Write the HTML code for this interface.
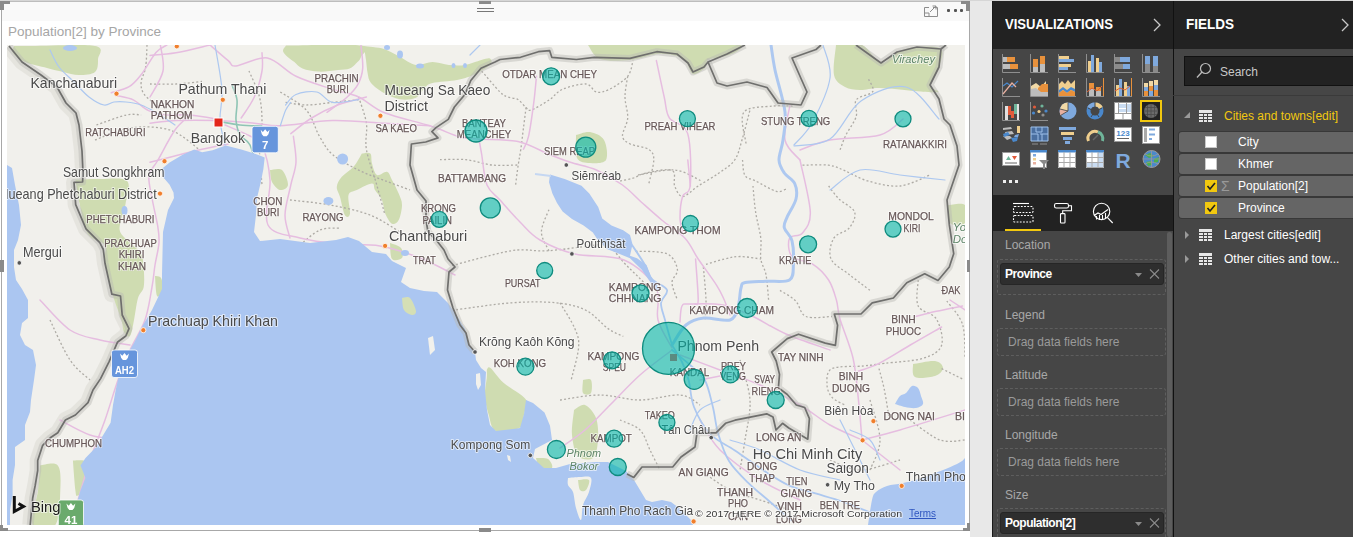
<!DOCTYPE html>
<html><head><meta charset="utf-8">
<style>
*{margin:0;padding:0;box-sizing:border-box}
html,body{width:1353px;height:537px;overflow:hidden;background:#fff;font-family:"Liberation Sans",sans-serif}
.a{position:absolute}
.lbl{position:absolute;color:#a8a8a8;font-size:12px;left:1005px}
.well{position:absolute;left:997px;width:169px;height:28px;border:1px dashed #5e5e5e;border-radius:3px}
.well span{position:absolute;left:10px;top:6px;font-size:12px;color:#9a9a9a}
.pill{position:absolute;left:1000px;width:164px;height:22px;background:#2e2e2e;border:1px solid #262626;border-radius:3px;color:#fff;font-size:12px;font-weight:bold;letter-spacing:-0.5px}
.pill b{position:absolute;left:4px;top:3px}
.frow{position:absolute;left:1179px;width:180px;height:20px;background:#656565;border-radius:3px;box-shadow:0 0 0 1px #383838}
.frow i{position:absolute;left:26px;top:4px;width:12px;height:12px;background:#fff;border:1px solid #c8c8c8}
.frow i.ck{background:#f2c80f;border-color:#f2c80f}
.frow span{position:absolute;left:59px;top:3px;color:#fff;font-size:12px}
</style></head><body>
<!-- canvas background -->
<div class="a" style="left:0;top:0;width:970px;height:537px;background:#fff"></div>
<!-- header strip -->
<div class="a" style="left:2px;top:2px;width:967px;height:19px;background:#f9f9f9"></div>
<!-- frame borders -->
<div class="a" style="left:0;top:0;width:970px;height:2px;background:#bdbdbd"></div>
<div class="a" style="left:1px;top:0;width:1px;height:531px;background:#a8a8a8"></div>
<div class="a" style="left:969px;top:0;width:1px;height:531px;background:#a8a8a8"></div>
<div class="a" style="left:1px;top:530px;width:969px;height:1px;background:#a8a8a8"></div>
<!-- handles -->
<div class="a" style="left:0;top:1px;width:10px;height:3px;background:#8a8a8a"></div>
<div class="a" style="left:0;top:1px;width:4px;height:9px;background:#8a8a8a"></div>
<div class="a" style="left:961px;top:1px;width:9px;height:3px;background:#8a8a8a"></div>
<div class="a" style="left:966px;top:1px;width:4px;height:10px;background:#8a8a8a"></div>
<div class="a" style="left:479px;top:1px;width:12px;height:3px;background:#8a8a8a"></div>
<div class="a" style="left:479px;top:528px;width:12px;height:4px;background:#8a8a8a"></div>
<div class="a" style="left:0;top:260px;width:4px;height:12px;background:#8a8a8a"></div>
<div class="a" style="left:967px;top:260px;width:3px;height:12px;background:#8a8a8a"></div>
<div class="a" style="left:0;top:525px;width:3px;height:6px;background:#8a8a8a"></div>
<div class="a" style="left:0;top:528px;width:8px;height:3px;background:#8a8a8a"></div>
<div class="a" style="left:963px;top:528px;width:7px;height:3px;background:#8a8a8a"></div>
<div class="a" style="left:967px;top:523px;width:3px;height:8px;background:#8a8a8a"></div>
<!-- hamburger -->
<div class="a" style="left:477px;top:8px;width:17px;height:1px;background:#777"></div>
<div class="a" style="left:477px;top:11px;width:17px;height:1px;background:#777"></div>
<!-- focus icon -->
<svg class="a" style="left:922px;top:3px" width="18" height="15" viewBox="0 0 18 15">
<path d="M2.5 4.5 V13.5 H15.5 V4.5 M2.5 4.5 H7 M11 4.5 H15.5" fill="none" stroke="#8c8c8c" stroke-width="1"/>
<path d="M2.5 10 H7 V13.5" fill="none" stroke="#8c8c8c" stroke-width="1"/>
<path d="M8 9 L14 3 M10.5 3 H14 V6.5" fill="none" stroke="#8c8c8c" stroke-width="1"/>
</svg>
<div class="a" style="left:947px;top:9px;width:3px;height:3px;background:#555;border-radius:1px"></div>
<div class="a" style="left:954px;top:9px;width:3px;height:3px;background:#555;border-radius:1px"></div>
<div class="a" style="left:960px;top:9px;width:3px;height:3px;background:#555;border-radius:1px"></div>
<!-- title -->
<div class="a" style="left:8px;top:24px;font-size:13.5px;color:#a6a6a6;white-space:nowrap">Population[2] by Province</div>

<!-- MAP -->
<div id="map" class="a" style="will-change:transform;left:7px;top:45px;width:958px;height:480px;overflow:hidden;background:#f2f1ec">
<svg width="958" height="480" viewBox="7 45 958 480" style="display:block;font-family:'Liberation Sans',sans-serif"><path d="M7 45 L9 46 L22 62 L41 75 L57 87 L66 103 L76 113 L79 125 L82 151 L83 173 L82.6 182 L74 182.4 L75.7 204.7 L86 228.8 L99.8 242.6 L103.3 249.5 L105 263.3 L111.9 294.2 L120.5 296 L122.2 315 L129 328.7 L125.8 336 L117.4 342.3 L109 361.8 L100.6 378.6 L93 390 L88 402.6 L75.4 415 L65.4 420 L57.8 432.7 L50.3 437.8 L42.7 445.3 L37.7 460.4 L37.7 470.5 L35.2 485.5 L32.7 498 L30.2 525 L7 525 Z" fill="#f1f0ec"/>
<clipPath id="mmclip"><path d="M7 45 L9 46 L22 62 L41 75 L57 87 L66 103 L76 113 L79 125 L82 151 L83 173 L82.6 182 L74 182.4 L75.7 204.7 L86 228.8 L99.8 242.6 L103.3 249.5 L105 263.3 L111.9 294.2 L120.5 296 L122.2 315 L129 328.7 L125.8 336 L117.4 342.3 L109 361.8 L100.6 378.6 L93 390 L88 402.6 L75.4 415 L65.4 420 L57.8 432.7 L50.3 437.8 L42.7 445.3 L37.7 460.4 L37.7 470.5 L35.2 485.5 L32.7 498 L30.2 525 L7 525 Z"/></clipPath>
<path d="M9 46 L22 62 L41 75 L57 87 L66 103 L76 113 L79 125 L82 151 L83 173 L82.6 182 L74 182.4 L75.7 204.7 L86 228.8 L99.8 242.6 L103.3 249.5 L105 263.3 L111.9 294.2 L120.5 296 L122.2 315 L129 328.7 L125.8 336 L117.4 342.3 L109 361.8 L100.6 378.6 L93 390 L88 402.6 L75.4 415 L65.4 420 L57.8 432.7 L50.3 437.8 L42.7 445.3 L37.7 460.4 L37.7 470.5 L35.2 485.5 L32.7 498 L30.2 525" fill="none" stroke="#d6d4cf" stroke-opacity="0.45" stroke-width="16" stroke-linejoin="round" clip-path="url(#mmclip)"/>
<path d="M7 165 L12 168 L15 185 L19 205 L21 225 L18 240 L14 250 L14 267 L16 280 L22 289 L28 300 L28 318 L22 323 L20 335 L25 345 L33 350 L36 365 L34 380 L31 400 L30 412 L25 425 L25 440 L15 447 L15 465 L12.6 480 L12.6 495 L10 510 L10 525 L7 525 Z" fill="#abc6f1"/>
<path d="M14 46 C17.0 46.0 18.5 46.0 32 46 C45.5 46.0 84.0 43.8 95 46 C106.0 48.2 98.0 54.7 98 59 C98.0 63.3 98.2 69.3 95 72 C91.8 74.7 84.3 75.0 79 75 C73.7 75.0 68.3 73.2 63 72 C57.7 70.8 53.3 69.7 47 68 C40.7 66.3 30.7 64.5 25 62 C19.3 59.5 14.8 55.7 13 53 C11.2 50.3 13.8 47.2 14 46" fill="#cfdcb1"/>
<path d="M286 45.6 C298.5 45.6 348.5 43.7 361 45.6 C373.5 47.5 361.8 54.0 361 57 C360.2 60.0 357.9 61.6 356 63.5 C354.1 65.4 352.7 67.3 349.7 68.4 C346.7 69.5 343.1 69.5 338 70 C332.9 70.5 324.7 71.9 318.8 71.6 C312.9 71.3 306.6 70.0 302.5 68.4 C298.4 66.8 297.1 64.2 294.4 62 C291.6 59.8 287.9 57.3 286 55.4 C284.1 53.5 283.0 52.1 283 50.5 C283.0 48.9 285.5 46.4 286 45.6" fill="#cfdcb1"/>
<path d="M364 46 C367.3 46.5 378.0 47.2 384 49 C390.0 50.8 394.7 54.3 400 57 C405.3 59.7 410.6 64.2 416 65 C421.4 65.8 427.1 62.0 432.6 62 C438.1 62.0 443.6 64.5 449 65 C454.4 65.5 459.6 65.8 465 65 C470.4 64.2 477.2 61.1 481.4 60 C485.6 58.9 488.6 57.8 490 58.6 C491.4 59.4 492.8 62.3 490 65 C487.2 67.7 478.5 72.5 473 75 C467.5 77.5 463.7 78.7 457 80 C450.3 81.3 438.0 81.7 432.6 83 C427.2 84.3 427.3 85.5 424.5 88 C421.7 90.5 420.1 95.8 416 97.7 C411.9 99.6 405.3 100.1 400 99.3 C394.7 98.5 388.8 95.7 384 93 C379.2 90.3 373.7 86.3 371 83 C368.3 79.7 368.4 76.8 367.6 73 C366.8 69.2 366.6 64.5 366 60 C365.4 55.5 364.3 48.3 364 46" fill="#cfdcb1"/>
<path d="M75.4 179.8 C79.5 179.7 91.4 178.8 100 179 C108.6 179.2 122.7 176.9 127 181 C131.3 185.1 126.5 197.2 125.6 203.5 C124.7 209.8 122.3 214.2 121.4 218.8 C120.5 223.5 118.6 227.4 120 231.4 C121.4 235.4 126.3 238.9 129.8 242.6 C133.3 246.3 138.7 249.5 141 253.7 C143.3 257.9 143.2 262.1 143.7 267.7 C144.1 273.2 144.6 281.9 143.7 287 C142.8 292.1 139.6 292.5 138 298 C136.4 303.5 135.3 313.7 134 320 C132.7 326.3 131.7 334.0 130 336 C128.3 338.0 125.4 334.7 124 332 C122.6 329.3 123.2 326.1 121.4 320 C119.6 313.9 115.8 305.3 113 295.6 C110.2 285.9 106.1 270.4 104.7 262 C103.3 253.6 107.5 249.7 104.7 245 C101.9 240.3 92.2 240.9 88 234 C83.8 227.1 81.6 212.5 79.5 203.5 C77.4 194.5 76.1 183.8 75.4 179.8" fill="#cfdcb1"/>
<path d="M155 276 C156.0 276.3 159.7 275.7 161 278 C162.3 280.3 163.7 287.0 163 290 C162.3 293.0 158.3 298.3 157 296 C155.7 293.7 155.3 279.3 155 276" fill="#cfdcb1"/>
<path d="M361.9 153.4 C363.3 153.4 368.6 151.7 370.3 153.4 C372.0 155.1 370.9 159.8 372 163.4 C373.1 167.0 374.5 173.6 377 175 C379.5 176.4 384.5 171.0 387 171.8 C389.5 172.6 390.1 176.4 392 180 C393.9 183.6 397.0 189.4 398.7 193.6 C400.4 197.8 402.0 200.6 402 205 C402.0 209.4 400.4 216.9 398.7 220 C397.0 223.1 394.2 224.8 392 223.7 C389.8 222.6 387.0 217.6 385.3 213.7 C383.6 209.8 383.7 203.9 382 200 C380.3 196.1 376.7 192.8 375 190 C373.3 187.2 375.0 183.5 372 183.5 C369.0 183.5 360.7 188.1 356.8 190 C352.9 191.9 349.6 191.1 348.5 195 C347.4 198.9 350.6 210.3 350 213.7 C349.4 217.1 346.7 218.1 345 215.3 C343.3 212.5 341.4 201.8 340 197 C338.6 192.2 336.5 190.2 336.8 186.8 C337.1 183.4 339.0 180.2 341.8 176.8 C344.6 173.5 350.1 170.6 353.5 166.7 C356.9 162.8 360.5 155.6 361.9 153.4" fill="#cfdcb1"/>
<path d="M270 170 C272.0 170.0 279.0 167.5 282 170 C285.0 172.5 288.3 181.7 288 185 C287.7 188.3 282.7 190.5 280 190 C277.3 189.5 273.7 185.3 272 182 C270.3 178.7 270.3 172.0 270 170" fill="#cfdcb1"/>
<path d="M836 45 C840.3 45.0 854.5 42.0 862 45 C869.5 48.0 875.2 61.8 881 63 C886.8 64.2 891.0 54.7 897 52 C903.0 49.3 909.7 47.5 917 47 C924.3 46.5 937.3 45.7 941 49 C944.7 52.3 940.8 61.0 939 67 C937.2 73.0 930.2 80.8 930 85 C929.8 89.2 940.5 91.0 938 92 C935.5 93.0 924.7 91.7 915 91 C905.3 90.3 889.2 88.2 880 88 C870.8 87.8 865.8 90.2 860 90 C854.2 89.8 849.3 89.5 845 87 C840.7 84.5 835.5 82.0 834 75 C832.5 68.0 835.7 50.0 836 45" fill="#cfdcb1"/>
<path d="M588 45 C606.7 45.0 674.7 45.0 700 45 C725.3 45.0 734.0 43.8 740 45 C746.0 46.2 739.0 50.0 736 52 C733.0 54.0 726.7 55.7 722 57 C717.3 58.3 710.8 58.2 708 60 C705.2 61.8 707.5 65.7 705 68 C702.5 70.3 696.2 75.0 693 74 C689.8 73.0 688.7 65.0 686 62 C683.3 59.0 681.8 57.3 677 56 C672.2 54.7 664.8 53.3 657 54 C649.2 54.7 639.5 59.2 630 60 C620.5 60.8 607.0 61.5 600 59 C593.0 56.5 590.0 47.3 588 45" fill="#cfdcb1"/>
<path d="M576 135 C578.3 134.5 585.3 131.2 590 132 C594.7 132.8 601.3 135.3 604 140 C606.7 144.7 608.3 156.2 606 160 C603.7 163.8 594.8 163.3 590 163 C585.2 162.7 579.3 162.7 577 158 C574.7 153.3 576.2 138.8 576 135" fill="#cfdcb1"/>
<path d="M486.8 369.8 C487.4 369.5 487.7 365.8 490.5 368 C493.3 370.2 497.6 377.5 503.5 382.8 C509.4 388.1 522.5 394.3 525.9 399.6 C529.3 404.9 524.9 409.9 524 414.5 C523.1 419.1 525.0 424.7 520.3 427.5 C515.6 430.3 501.3 433.4 496 431.2 C490.7 429.0 490.5 420.4 488.6 414.5 C486.8 408.6 485.2 402.1 484.9 395.9 C484.6 389.7 486.5 381.5 486.8 377.2 C487.1 372.9 486.8 371.0 486.8 369.8" fill="#cfdcb1"/>
<path d="M574 410 C575.8 409.2 581.3 403.7 585 405 C588.7 406.3 593.8 412.2 596 418 C598.2 423.8 598.5 433.3 598 440 C597.5 446.7 596.3 455.3 593 458 C589.7 460.7 581.5 459.8 578 456 C574.5 452.2 572.7 442.7 572 435 C571.3 427.3 573.7 414.2 574 410" fill="#cfdcb1"/>
<path d="M583 380 C584.3 380.0 589.7 377.8 591 380 C592.3 382.2 592.3 390.8 591 393 C589.7 395.2 584.3 395.2 583 393 C581.7 390.8 583.0 382.2 583 380" fill="#cfdcb1"/>
<path d="M536 458 C538.0 458.2 545.3 457.3 548 459 C550.7 460.7 553.3 466.3 552 468 C550.7 469.7 542.7 470.7 540 469 C537.3 467.3 536.7 459.8 536 458" fill="#cfdcb1"/>
<path d="M390 243 C391.8 243.8 399.0 245.5 401 248 C403.0 250.5 403.5 256.2 402 258 C400.5 259.8 394.0 261.5 392 259 C390.0 256.5 390.3 245.7 390 243" fill="#cfdcb1"/>
<path d="M913 364 C916.7 363.5 930.0 360.3 935 361 C940.0 361.7 943.0 365.5 943 368 C943.0 370.5 939.7 374.5 935 376 C930.3 377.5 918.7 379.0 915 377 C911.3 375.0 913.3 366.2 913 364" fill="#cfdcb1"/>
<path d="M948 205 C950.8 205.0 962.2 202.0 965 205 C967.8 208.0 967.5 220.0 965 223 C962.5 226.0 952.8 226.0 950 223 C947.2 220.0 948.3 208.0 948 205" fill="#cfdcb1"/>
<path d="M72.9 460.4 C75.4 460.8 85.5 458.8 88 463 C90.5 467.2 89.7 480.1 88 485.5 C86.3 490.9 80.1 494.8 78 495.6 C75.9 496.5 76.2 496.5 75.4 490.6 C74.6 484.7 73.3 465.4 72.9 460.4" fill="#cfdcb1"/>
<path d="M40 465.4 C43.0 465.4 54.4 461.2 57.8 465.4 C61.2 469.6 60.7 480.7 60.3 490.6 C59.9 500.5 59.9 519.3 55.3 525 C50.7 530.7 35.6 530.7 32.7 525 C29.8 519.3 36.8 500.5 38 490.6 C39.2 480.7 39.7 469.6 40 465.4" fill="#cfdcb1"/>
<path d="M583 480 C584.3 479.7 589.5 476.0 591 478 C592.5 480.0 593.0 490.0 592 492 C591.0 494.0 586.5 492.0 585 490 C583.5 488.0 583.3 481.7 583 480" fill="#cfdcb1"/>
<path d="M583 428 C584.2 427.5 588.8 424.2 590 425 C591.2 425.8 591.2 432.5 590 433 C588.8 433.5 584.2 428.8 583 428" fill="#cfdcb1"/>
<path d="M147 45 C146.8 48.7 146.6 61.2 145.6 67.4 C144.6 73.6 141.3 77.8 141.1 82.3 C140.8 86.8 141.6 90.5 144.1 94.2 C146.6 97.9 154.0 102.9 156 104.6" fill="none" stroke="#aeaba5" stroke-width="1.3" stroke-dasharray="2 2.2"/>
<path d="M96.4 125 C101.4 123.3 118.8 116.7 126.2 115 C133.7 113.3 138.6 115.0 141.1 115" fill="none" stroke="#aeaba5" stroke-width="1.3" stroke-dasharray="2 2.2"/>
<path d="M95 140 C100.8 138.0 117.5 129.7 130 128 C142.5 126.3 158.3 126.3 170 130 C181.7 133.7 195.0 146.7 200 150" fill="none" stroke="#aeaba5" stroke-width="1.3" stroke-dasharray="2 2.2"/>
<path d="M249 71 C250.8 75.3 257.3 88.3 259.5 97 C261.7 105.7 262.0 114.5 262 123.2 C262.0 131.9 259.5 139.0 259.5 149.3 C259.5 159.6 261.6 179.1 262 185" fill="none" stroke="#aeaba5" stroke-width="1.3" stroke-dasharray="2 2.2"/>
<path d="M150 84 C154.3 84.0 167.3 84.4 176 84 C184.7 83.6 197.7 81.9 202 81.5" fill="none" stroke="#aeaba5" stroke-width="1.3" stroke-dasharray="2 2.2"/>
<path d="M280.3 92 C284.6 95.0 299.9 102.8 306.4 110.2 C312.9 117.6 315.0 128.8 319.4 136.2 C323.8 143.6 326.0 148.8 332.5 154.5 C339.0 160.2 349.9 165.8 358.6 170.1 C367.3 174.4 376.0 177.3 384.6 180.6 C393.2 183.9 405.8 188.4 410 190" fill="none" stroke="#aeaba5" stroke-width="1.3" stroke-dasharray="2 2.2"/>
<path d="M358.6 97 C359.9 101.4 365.1 114.5 366.4 123.2 C367.7 131.9 364.7 139.0 366.4 149.3 C368.1 159.6 373.7 174.1 376.8 185 C379.9 195.9 383.6 210.0 385 215" fill="none" stroke="#aeaba5" stroke-width="1.3" stroke-dasharray="2 2.2"/>
<path d="M285.6 102.4 C289.1 102.8 298.6 105.0 306.4 105 C314.2 105.0 323.8 103.3 332.5 102.4 C341.2 101.5 354.2 100.2 358.6 99.7" fill="none" stroke="#aeaba5" stroke-width="1.3" stroke-dasharray="2 2.2"/>
<path d="M290 200 C296.7 200.8 316.7 202.5 330 205 C343.3 207.5 358.3 210.5 370 215 C381.7 219.5 395.0 229.2 400 232" fill="none" stroke="#aeaba5" stroke-width="1.3" stroke-dasharray="2 2.2"/>
<path d="M300 245 C303.3 242.5 313.3 232.8 320 230 C326.7 227.2 336.7 228.3 340 228" fill="none" stroke="#aeaba5" stroke-width="1.3" stroke-dasharray="2 2.2"/>
<path d="M481.7 71 C484.8 74.5 495.6 87.7 500 92 C504.4 96.3 504.8 95.7 507.8 97 C510.8 98.3 515.2 97.9 518.2 99.7 C521.2 101.5 523.8 105.9 526 107.6 C528.2 109.3 527.3 111.3 531.2 110 C535.1 108.7 544.3 103.2 549.5 99.7 C554.7 96.2 556.4 91.9 562.5 89.3 C568.6 86.7 580.4 83.5 586 84 C591.6 84.5 592.5 91.1 596.4 92 C600.3 92.9 604.2 91.9 609.4 89.3 C614.6 86.7 623.8 81.1 627.7 76.3 C631.6 71.5 632.1 63.2 633 60.6" fill="none" stroke="#aeaba5" stroke-width="1.3" stroke-dasharray="2 2.2"/>
<path d="M526 107.6 C525.6 111.1 524.3 121.5 523.4 128.4 C522.5 135.4 521.7 143.2 520.8 149.3 C519.9 155.4 519.1 159.1 518.2 165 C517.3 170.9 516.0 181.7 515.6 185" fill="none" stroke="#aeaba5" stroke-width="1.3" stroke-dasharray="2 2.2"/>
<path d="M627.7 76.3 C627.2 79.8 625.0 90.0 625 97 C625.0 104.0 628.1 111.5 627.7 118 C627.3 124.5 622.1 131.7 622.5 136 C622.9 140.3 626.0 141.8 630.3 144 C634.6 146.2 644.6 146.7 648.5 149.3 C652.4 151.9 653.8 153.8 653.8 159.7 C653.8 165.6 649.4 180.8 648.5 185" fill="none" stroke="#aeaba5" stroke-width="1.3" stroke-dasharray="2 2.2"/>
<path d="M440 159.7 C444.3 159.7 457.3 158.8 466 159.7 C474.7 160.6 483.3 164.1 492 165 C500.7 165.9 513.7 165.0 518 165" fill="none" stroke="#aeaba5" stroke-width="1.3" stroke-dasharray="2 2.2"/>
<path d="M638 175 C644.1 174.2 664.1 169.1 674.6 170 C685.1 170.9 696.4 178.8 700.7 180.6" fill="none" stroke="#aeaba5" stroke-width="1.3" stroke-dasharray="2 2.2"/>
<path d="M620 180.9 C622.2 180.4 628.7 179.5 633 178.2 C637.3 176.9 639.5 174.3 646 173 C652.5 171.7 667.2 168.2 672 170.4 C676.8 172.6 672.9 181.7 674.7 186 C676.5 190.3 678.7 196.5 682.6 196.5 C686.5 196.5 692.1 189.9 698.2 186 C704.3 182.1 712.9 177.3 719 173 C725.1 168.7 730.9 165.5 734.7 160 C738.5 154.5 739.5 148.3 742 140 C744.5 131.7 748.7 115.0 750 110" fill="none" stroke="#aeaba5" stroke-width="1.3" stroke-dasharray="2 2.2"/>
<path d="M742.5 160 C742.9 162.6 742.8 172.1 745 175.6 C747.2 179.1 750.4 178.3 755.6 180.9 C760.8 183.5 771.2 190.0 776.4 191.3 C781.6 192.6 785.1 189.1 786.8 188.7" fill="none" stroke="#aeaba5" stroke-width="1.3" stroke-dasharray="2 2.2"/>
<path d="M753 186 C753.4 190.3 754.3 203.3 755.6 212 C756.9 220.7 759.9 230.4 760.8 238.2 C761.7 246.0 759.9 252.9 760.8 259 C761.7 265.1 764.7 267.9 766 274.7 C767.3 281.5 768.2 295.8 768.6 300" fill="none" stroke="#aeaba5" stroke-width="1.3" stroke-dasharray="2 2.2"/>
<path d="M706 264.3 C709.0 263.4 718.6 260.3 724.3 259 C730.0 257.7 733.9 256.5 740 256.5 C746.1 256.5 757.3 258.6 760.8 259" fill="none" stroke="#aeaba5" stroke-width="1.3" stroke-dasharray="2 2.2"/>
<path d="M703.4 267 C703.8 272.5 705.7 291.2 706 300 C706.3 308.8 705.2 316.7 705 320" fill="none" stroke="#aeaba5" stroke-width="1.3" stroke-dasharray="2 2.2"/>
<path d="M802.5 165.2 C806.9 165.2 821.6 164.3 828.6 165.2 C835.6 166.1 837.7 167.8 844.2 170.4 C850.7 173.0 858.4 178.3 867.7 180.9 C877.0 183.5 889.6 187.0 900 186 C910.4 185.0 925.0 176.8 930 175" fill="none" stroke="#aeaba5" stroke-width="1.3" stroke-dasharray="2 2.2"/>
<path d="M828.6 186 C830.3 188.2 834.7 194.7 839 199 C843.3 203.3 852.9 207.2 854.6 212 C856.3 216.8 852.9 223.4 849.4 227.8 C845.9 232.2 836.9 233.0 833.8 238.2 C830.7 243.4 828.4 252.9 831 259 C833.6 265.1 842.9 269.5 849.4 274.7 C855.9 279.9 866.6 287.7 870 290.3" fill="none" stroke="#aeaba5" stroke-width="1.3" stroke-dasharray="2 2.2"/>
<path d="M635.6 251.2 C640.8 251.6 660.0 250.8 667 253.8 C674.0 256.9 676.6 264.7 677.4 269.5 C678.2 274.3 672.0 277.4 672 282.5 C672.0 287.6 676.5 297.1 677.4 300" fill="none" stroke="#aeaba5" stroke-width="1.3" stroke-dasharray="2 2.2"/>
<path d="M452 265.6 C461.9 263.1 495.5 253.2 511.6 250.7 C527.8 248.2 532.8 251.9 548.9 250.7 C565.0 249.5 598.5 244.5 608.4 243.3" fill="none" stroke="#aeaba5" stroke-width="1.3" stroke-dasharray="2 2.2"/>
<path d="M452 310.3 C461.9 309.1 494.2 304.1 511.6 302.8 C529.0 301.6 543.9 301.6 556.3 302.8 C568.7 304.1 577.3 306.0 586 310.3 C594.7 314.6 602.2 324.6 608.4 328.9 C614.6 333.2 620.8 335.1 623.3 336.3" fill="none" stroke="#aeaba5" stroke-width="1.3" stroke-dasharray="2 2.2"/>
<path d="M548.9 209.8 C547.6 213.5 541.4 225.2 541.4 232 C541.4 238.8 547.6 247.6 548.9 250.7" fill="none" stroke="#aeaba5" stroke-width="1.3" stroke-dasharray="2 2.2"/>
<path d="M608.4 243.3 C610.9 246.4 618.3 256.3 623.3 261.9 C628.3 267.5 633.2 271.9 638.2 276.8 C643.2 281.8 650.5 289.1 653 291.6" fill="none" stroke="#aeaba5" stroke-width="1.3" stroke-dasharray="2 2.2"/>
<path d="M560 302.8 C562.5 307.1 571.9 321.4 575 328.9 C578.1 336.3 579.2 339.0 578.6 347.5 C578.0 356.0 572.4 374.6 571.2 380" fill="none" stroke="#aeaba5" stroke-width="1.3" stroke-dasharray="2 2.2"/>
<path d="M560 400 C566.7 399.2 586.7 395.0 600 395 C613.3 395.0 626.7 400.0 640 400 C653.3 400.0 670.0 394.2 680 395 C690.0 395.8 696.7 403.3 700 405" fill="none" stroke="#aeaba5" stroke-width="1.3" stroke-dasharray="2 2.2"/>
<path d="M620 420 C623.3 421.7 635.0 425.0 640 430 C645.0 435.0 646.7 443.3 650 450 C653.3 456.7 658.3 466.7 660 470" fill="none" stroke="#aeaba5" stroke-width="1.3" stroke-dasharray="2 2.2"/>
<path d="M740 360 C741.7 366.7 749.2 386.7 750 400 C750.8 413.3 746.7 428.3 745 440 C743.3 451.7 740.8 465.0 740 470" fill="none" stroke="#aeaba5" stroke-width="1.3" stroke-dasharray="2 2.2"/>
<path d="M918.2 280 C918.2 284.3 915.2 299.5 918.2 306 C921.2 312.5 932.5 312.5 936.4 319 C940.3 325.5 943.8 338.7 941.6 345.2 C939.4 351.7 933.0 355.2 923.4 358.2 C913.8 361.2 894.3 362.1 884.3 363.4 C874.3 364.7 872.1 365.1 863.4 366 C854.7 366.9 838.1 365.6 832 368.6 C825.9 371.7 827.0 379.5 827 384.3 C827.0 389.1 829.0 393.8 832 397.3 C835.0 400.8 842.8 403.8 845 405.1" fill="none" stroke="#aeaba5" stroke-width="1.3" stroke-dasharray="2 2.2"/>
<path d="M780 290.4 C782.6 292.1 791.3 296.5 795.6 300.9 C799.9 305.2 799.9 313.9 806 316.5 C812.1 319.1 827.7 316.5 832 316.5" fill="none" stroke="#aeaba5" stroke-width="1.3" stroke-dasharray="2 2.2"/>
<path d="M879 368.6 C879.9 372.1 882.5 380.9 884.3 389.5 C886.0 398.1 888.6 414.9 889.5 420" fill="none" stroke="#aeaba5" stroke-width="1.3" stroke-dasharray="2 2.2"/>
<path d="M941.6 368.6 L962.5 379" fill="none" stroke="#aeaba5" stroke-width="1.3" stroke-dasharray="2 2.2"/>
<path d="M946.8 301 C949.4 304.9 959.5 314.8 962.5 324.3 C965.5 333.8 964.6 352.4 965 358" fill="none" stroke="#aeaba5" stroke-width="1.3" stroke-dasharray="2 2.2"/>
<path d="M700 470 C705.0 473.3 720.0 485.0 730 490 C740.0 495.0 750.0 496.7 760 500 C770.0 503.3 785.0 508.3 790 510" fill="none" stroke="#aeaba5" stroke-width="1.3" stroke-dasharray="2 2.2"/>
<path d="M870 400 C871.7 406.7 880.0 428.3 880 440 C880.0 451.7 871.7 465.0 870 470" fill="none" stroke="#aeaba5" stroke-width="1.3" stroke-dasharray="2 2.2"/>
<path d="M910 420 C915.0 423.3 930.8 436.7 940 440 C949.2 443.3 960.8 440.0 965 440" fill="none" stroke="#aeaba5" stroke-width="1.3" stroke-dasharray="2 2.2"/>
<path d="M830 460 C835.0 461.7 848.3 470.0 860 470 C871.7 470.0 893.3 461.7 900 460" fill="none" stroke="#aeaba5" stroke-width="1.3" stroke-dasharray="2 2.2"/>
<path d="M868.6 79.2 C869.3 81.3 874.8 88.1 872.7 91.6 C870.6 95.0 859.0 95.8 856.2 99.9 C853.5 104.1 857.9 110.6 856.2 116.5 C854.5 122.4 848.5 129.6 845.8 135.2 C843.1 140.8 841.0 147.5 840 150" fill="none" stroke="#aeaba5" stroke-width="1.3" stroke-dasharray="2 2.2"/>
<path d="M746 143.5 C745.6 138.3 739.3 118.5 743.8 112.3 C748.3 106.1 764.5 107.1 772.8 106.1 C781.1 105.1 790.1 106.1 793.6 106.1" fill="none" stroke="#aeaba5" stroke-width="1.3" stroke-dasharray="2 2.2"/>
<path d="M50 320 C53.3 326.7 63.3 350.0 70 360 C76.7 370.0 86.7 376.7 90 380" fill="none" stroke="#aeaba5" stroke-width="1.3" stroke-dasharray="2 2.2"/>
<path d="M210 45 C213.0 47.6 223.9 57.1 228.2 60.6 C232.5 64.1 229.5 66.3 236 65.9 C242.5 65.5 257.3 56.3 267.3 58 C277.3 59.7 285.1 71.1 296 76.3 C306.9 81.5 322.1 85.8 332.5 89.3 C342.9 92.8 349.9 93.1 358.6 97 C367.3 100.9 372.7 108.0 384.6 112.8 C396.5 117.6 417.4 121.8 430 125.8 C442.6 129.8 451.8 134.8 460 137 C468.2 139.2 469.3 138.2 479 139 C488.7 139.8 506.2 138.9 518 141.5 C529.8 144.1 540.8 151.0 549.5 154.5 C558.2 158.0 562.5 159.7 570.3 162.3 C578.1 164.9 587.7 166.2 596.4 170 C605.1 173.8 615.1 179.7 622.5 185 C629.9 190.3 634.4 195.9 640.9 201.7 C647.4 207.5 654.4 213.9 661.7 220 C669.1 226.1 678.9 231.7 685 238.2 C691.1 244.7 693.0 251.2 698.2 259 C703.5 266.8 712.1 278.3 716.5 285.1 C720.9 291.9 722.0 295.0 724.3 300 C726.5 305.0 729.0 312.5 730 315" fill="none" stroke="#e6bde0" stroke-width="1.5" stroke-linecap="round" stroke-linejoin="round"/>
<path d="M150 123.2 C154.3 122.8 165.2 121.0 176 120.6 C186.8 120.2 201.9 120.2 215 120.6 C228.1 121.0 243.4 122.3 254.3 123.2 C265.2 124.1 267.3 126.2 280.3 125.8 C293.3 125.4 315.1 121.0 332.5 120.6 C349.9 120.2 368.4 122.3 384.6 123.2 C400.9 124.1 422.4 125.4 430 125.8" fill="none" stroke="#e6bde0" stroke-width="1.5" stroke-linecap="round" stroke-linejoin="round"/>
<path d="M290.8 133.6 C294.3 131.0 303.8 122.8 311.6 118 C319.4 113.2 328.6 108.5 337.7 105 C346.8 101.5 361.6 98.3 366.4 97" fill="none" stroke="#e6bde0" stroke-width="1.5" stroke-linecap="round" stroke-linejoin="round"/>
<path d="M361 45.6 C361.3 49.4 363.2 61.9 362.7 68.4 C362.2 74.9 360.5 79.7 357.8 84.6 C355.1 89.5 351.5 93.1 346.4 97.7 C341.3 102.3 330.2 109.9 327 112.3" fill="none" stroke="#e6bde0" stroke-width="1.5" stroke-linecap="round" stroke-linejoin="round"/>
<path d="M293.4 136.2 C293.8 140.5 296.4 154.2 296 162.3 C295.6 170.4 292.6 176.2 290.8 185 C289.0 193.8 285.1 206.2 285 215 C284.9 223.8 289.2 234.2 290 238" fill="none" stroke="#e6bde0" stroke-width="1.5" stroke-linecap="round" stroke-linejoin="round"/>
<path d="M150 162.3 C153.5 161.4 162.2 159.2 170.9 157 C179.6 154.8 192.4 151.5 202 149.3 C211.6 147.1 223.8 144.9 228.2 144" fill="none" stroke="#e6bde0" stroke-width="1.5" stroke-linecap="round" stroke-linejoin="round"/>
<path d="M262 52.8 C262.0 55.8 263.3 63.6 262 71 C260.7 78.4 257.8 89.2 254.3 97 C250.8 104.8 243.4 114.5 241.2 118" fill="none" stroke="#e6bde0" stroke-width="1.5" stroke-linecap="round" stroke-linejoin="round"/>
<path d="M150 55.4 C154.3 55.0 166.0 54.5 176 52.8 C186.0 51.1 204.3 46.3 210 45" fill="none" stroke="#e6bde0" stroke-width="1.5" stroke-linecap="round" stroke-linejoin="round"/>
<path d="M160.4 45 C160.8 49.3 164.7 62.3 163 71 C161.3 79.7 152.2 92.7 150 97" fill="none" stroke="#e6bde0" stroke-width="1.5" stroke-linecap="round" stroke-linejoin="round"/>
<path d="M225 125 C229.2 126.8 243.8 132.7 250 136 C256.2 139.3 258.7 137.7 262 145 C265.3 152.3 269.0 166.7 270 180 C271.0 193.3 263.0 215.3 268 225 C273.0 234.7 288.0 234.8 300 238 C312.0 241.2 326.7 242.7 340 244 C353.3 245.3 366.7 243.7 380 246 C393.3 248.3 407.5 253.2 420 258 C432.5 262.8 449.2 272.2 455 275" fill="none" stroke="#e6bde0" stroke-width="1.5" stroke-linecap="round" stroke-linejoin="round"/>
<path d="M222 120 C216.7 119.2 199.2 115.8 190 115 C180.8 114.2 173.9 115.7 167 115 C160.1 114.3 154.2 113.1 148.6 110.6 C143.0 108.1 138.9 102.6 133.7 100.1 C128.5 97.6 120.0 96.4 117.3 95.7" fill="none" stroke="#e6bde0" stroke-width="1.5" stroke-linecap="round" stroke-linejoin="round"/>
<path d="M111.3 92.7 C114.3 91.7 124.2 89.7 129.2 86.7 C134.2 83.7 136.6 80.5 141.1 74.8 C145.6 69.1 151.7 57.5 156 52.5 C160.3 47.5 165.2 46.2 167 45" fill="none" stroke="#e6bde0" stroke-width="1.5" stroke-linecap="round" stroke-linejoin="round"/>
<path d="M190 115 C187.5 117.5 180.3 122.5 175 130 C169.7 137.5 162.3 152.4 158 160 C153.7 167.6 150.0 169.3 149 175.6 C148.0 181.9 150.6 189.6 152 198 C153.4 206.4 156.5 218.6 157.7 226 C158.9 233.4 159.4 236.1 159 242.6 C158.6 249.1 156.2 257.6 155 265 C153.8 272.4 153.7 277.8 152 287 C150.3 296.2 148.7 309.5 145 320 C141.3 330.5 134.5 340.0 130 350 C125.5 360.0 122.2 368.3 118 380 C113.8 391.7 109.7 406.7 105 420 C100.3 433.3 94.5 446.7 90 460 C85.5 473.3 81.3 489.2 78 500 C74.7 510.8 71.3 520.8 70 525" fill="none" stroke="#e6bde0" stroke-width="1.5" stroke-linecap="round" stroke-linejoin="round"/>
<path d="M479 139 C479.4 141.6 480.4 146.8 481.7 154.5 C483.0 162.2 483.9 177.4 487 185 C490.1 192.6 494.5 193.8 500 200 C505.5 206.2 513.3 215.3 520 222 C526.7 228.7 530.8 234.7 540 240 C549.2 245.3 561.0 250.7 575 254 C589.0 257.3 610.5 254.3 624 260 C637.5 265.7 650.3 278.0 656 288 C661.7 298.0 655.3 310.0 658 320 C660.7 330.0 669.7 343.3 672 348" fill="none" stroke="#e6bde0" stroke-width="1.5" stroke-linecap="round" stroke-linejoin="round"/>
<path d="M536.5 76.3 C536.0 80.7 535.1 92.4 533.8 102.4 C532.5 112.4 530.3 128.4 528.6 136.2 C526.9 144.0 524.3 147.1 523.4 149.3" fill="none" stroke="#e6bde0" stroke-width="1.5" stroke-linecap="round" stroke-linejoin="round"/>
<path d="M656.4 60.6 C657.7 66.7 662.0 87.4 664.2 97 C666.4 106.6 665.5 111.9 669.4 118 C673.3 124.1 684.2 122.4 687.7 133.6 C691.2 144.8 691.1 174.5 690.3 185 C689.4 195.5 684.3 191.1 682.6 196.5 C680.9 201.9 680.0 211.3 680 217.4 C680.0 223.5 682.2 230.4 682.6 233" fill="none" stroke="#e6bde0" stroke-width="1.5" stroke-linecap="round" stroke-linejoin="round"/>
<path d="M687.8 160 L690.4 186" fill="none" stroke="#e6bde0" stroke-width="1.5" stroke-linecap="round" stroke-linejoin="round"/>
<path d="M800 160 C801.7 168.7 809.9 199.8 810.3 212 C810.7 224.2 806.0 228.6 802.5 233 C799.0 237.4 791.2 234.3 789.5 238.2 C787.8 242.1 788.1 252.2 792 256.5 C795.9 260.9 806.9 260.4 813 264.3 C819.1 268.2 824.7 274.1 828.6 280 C832.5 285.9 834.5 293.5 836.4 300 C838.3 306.5 837.2 309.3 840 319 C842.8 328.7 850.0 344.9 853 358 C856.0 371.1 856.7 383.6 858.2 397.3 C859.7 411.0 861.4 432.9 862 440" fill="none" stroke="#e6bde0" stroke-width="1.5" stroke-linecap="round" stroke-linejoin="round"/>
<path d="M790 105 C789.2 110.8 783.3 130.8 785 140 C786.7 149.2 797.5 156.7 800 160" fill="none" stroke="#e6bde0" stroke-width="1.5" stroke-linecap="round" stroke-linejoin="round"/>
<path d="M695.6 259 C696.0 265.8 698.3 292.5 698.2 300 C698.1 307.5 695.5 303.3 695 304" fill="none" stroke="#e6bde0" stroke-width="1.5" stroke-linecap="round" stroke-linejoin="round"/>
<path d="M672 350 C666.7 354.2 650.3 365.8 640 375 C629.7 384.2 619.2 395.8 610 405 C600.8 414.2 593.3 422.8 585 430 C576.7 437.2 564.2 445.0 560 448" fill="none" stroke="#e6bde0" stroke-width="1.5" stroke-linecap="round" stroke-linejoin="round"/>
<path d="M680 355 C686.7 357.5 706.7 365.0 720 370 C733.3 375.0 746.7 379.2 760 385 C773.3 390.8 788.3 398.3 800 405 C811.7 411.7 819.7 419.2 830 425 C840.3 430.8 856.7 437.5 862 440" fill="none" stroke="#e6bde0" stroke-width="1.5" stroke-linecap="round" stroke-linejoin="round"/>
<path d="M680 322 C680.3 319.3 680.3 309.0 682 306 C683.7 303.0 683.2 304.2 690 304 C696.8 303.8 712.7 303.0 723 305 C733.3 307.0 741.5 311.2 752 316 C762.5 320.8 773.0 328.3 786 334 C799.0 339.7 822.7 347.3 830 350" fill="none" stroke="#e6bde0" stroke-width="1.5" stroke-linecap="round" stroke-linejoin="round"/>
<path d="M903 119 C899.2 121.7 892.2 131.5 880 135 C867.8 138.5 843.3 137.5 830 140 C816.7 142.5 805.0 148.3 800 150" fill="none" stroke="#e6bde0" stroke-width="1.5" stroke-linecap="round" stroke-linejoin="round"/>
<path d="M941.6 327 C936.4 330.0 920.7 338.9 910.3 345 C899.9 351.1 887.7 359.0 879 363.4 C870.3 367.8 861.7 369.9 858.2 371.2" fill="none" stroke="#e6bde0" stroke-width="1.5" stroke-linecap="round" stroke-linejoin="round"/>
<path d="M962.5 306 C958.1 306.9 944.2 309.6 936.4 311.3 C928.6 313.1 919.1 315.6 915.6 316.5" fill="none" stroke="#e6bde0" stroke-width="1.5" stroke-linecap="round" stroke-linejoin="round"/>
<path d="M730 374 L700 380" fill="none" stroke="#e6bde0" stroke-width="1.5" stroke-linecap="round" stroke-linejoin="round"/>
<path d="M862 440 C868.3 438.3 882.8 435.0 900 430 C917.2 425.0 954.2 413.3 965 410" fill="none" stroke="#e6bde0" stroke-width="1.5" stroke-linecap="round" stroke-linejoin="round"/>
<path d="M862 440 L900 470" fill="none" stroke="#e6bde0" stroke-width="1.5" stroke-linecap="round" stroke-linejoin="round"/>
<path d="M700 420 C703.3 425.0 710.0 440.0 720 450 C730.0 460.0 746.7 471.7 760 480 C773.3 488.3 793.3 496.7 800 500" fill="none" stroke="#e6bde0" stroke-width="1.5" stroke-linecap="round" stroke-linejoin="round"/>
<path d="M950 300 L965 310" fill="none" stroke="#e6bde0" stroke-width="1.5" stroke-linecap="round" stroke-linejoin="round"/>
<path d="M40 300 C45.0 305.0 60.0 323.3 70 330 C80.0 336.7 90.0 337.5 100 340 C110.0 342.5 125.0 344.2 130 345" fill="none" stroke="#e6bde0" stroke-width="1.5" stroke-linecap="round" stroke-linejoin="round"/>
<path d="M60 420 C65.0 422.5 80.0 431.7 90 435 C100.0 438.3 115.0 439.2 120 440" fill="none" stroke="#e6bde0" stroke-width="1.5" stroke-linecap="round" stroke-linejoin="round"/>
<path d="M232 85 C232.8 87.5 236.3 94.2 237 100 C237.7 105.8 235.5 114.2 236 120 C236.5 125.8 237.7 130.8 240 135 C242.3 139.2 247.0 138.8 250 145 C253.0 151.2 256.7 167.5 258 172" fill="none" stroke="#8fc5b5" stroke-width="1.6"/>
<path d="M222 122 C225.0 122.5 233.3 124.3 240 125 C246.7 125.7 258.3 125.8 262 126" fill="none" stroke="#8fc5b5" stroke-width="1.6"/>
<path d="M771 45 C771.7 49.2 772.7 58.8 775 70 C777.3 81.2 783.7 100.3 785 112 C786.3 123.7 784.0 132.0 783 140 C782.0 148.0 778.8 154.5 779 160 C779.2 165.5 781.7 169.1 784.3 173 C786.9 176.9 792.8 179.2 794.7 183.5 C796.7 187.8 797.3 193.3 796 199 C794.7 204.7 789.0 212.6 787 217.4 C785.0 222.2 783.5 223.9 784.3 227.8 C785.1 231.7 790.5 234.7 792 240.8 C793.5 246.9 793.8 257.8 793.4 264.3 C793.0 270.8 794.1 277.2 789.5 280 C784.9 282.8 773.4 280.8 766 281.2 C758.6 281.6 749.4 281.4 745.2 282.5 C741.0 283.6 742.2 283.9 741 288 C739.8 292.1 739.8 301.7 738 307 C736.2 312.3 735.7 318.2 730 320 C724.3 321.8 711.3 317.2 704 318 C696.7 318.8 691.3 320.5 686 325 C680.7 329.5 674.3 341.7 672 345" fill="none" stroke="#adc8f0" stroke-width="3" stroke-linecap="round" stroke-linejoin="round"/>
<path d="M672 345 C673.7 347.8 679.2 356.2 682 362 C684.8 367.8 686.6 372.5 688.6 380 C690.6 387.5 690.4 398.0 694 407 C697.6 416.0 703.5 426.8 710.2 434 C717.0 441.2 726.0 444.4 734.5 450.2 C743.0 456.0 752.5 463.1 761.5 469 C770.5 474.9 779.5 481.2 788.5 485.3 C797.5 489.4 806.5 490.7 815.5 493.4 C824.5 496.1 833.5 498.4 842.5 501.5 C851.5 504.6 865.0 510.5 869.5 512.3" fill="none" stroke="#adc8f0" stroke-width="1.8" stroke-linecap="round" stroke-linejoin="round"/>
<path d="M672 350 C675.0 352.5 684.5 360.0 690 365 C695.5 370.0 701.0 373.0 704.8 380 C708.6 387.0 710.6 398.0 712.9 407 C715.1 416.0 715.6 425.0 718.3 434 C721.0 443.0 724.0 452.9 729 461 C734.0 469.1 741.2 475.9 748 482.6 C754.8 489.4 762.4 495.2 769.6 501.5 C776.8 507.8 787.6 517.2 791.2 520.4" fill="none" stroke="#adc8f0" stroke-width="1.8" stroke-linecap="round" stroke-linejoin="round"/>
<path d="M632 245 C634.2 248.3 641.7 259.3 645 265 C648.3 270.7 648.3 274.8 652 279 C655.7 283.2 665.5 286.0 667 290 C668.5 294.0 661.3 298.0 661 303 C660.7 308.0 663.2 313.0 665 320 C666.8 327.0 670.8 340.8 672 345" fill="none" stroke="#adc8f0" stroke-width="1.8" stroke-linecap="round" stroke-linejoin="round"/>
<path d="M823 45 C824.2 50.5 831.8 65.0 830 78 C828.2 91.0 818.0 111.8 812 123 C806.0 134.2 797.0 141.3 794 145" fill="none" stroke="#adc8f0" stroke-width="1.2" stroke-linecap="round" stroke-linejoin="round"/>
<path d="M939 119 C933.5 113.7 919.0 90.0 906 87 C893.0 84.0 873.7 92.3 861 101 C848.3 109.7 841.2 131.5 830 139 C818.8 146.5 800.0 144.8 794 146" fill="none" stroke="#adc8f0" stroke-width="1.2" stroke-linecap="round" stroke-linejoin="round"/>
<path d="M945 180 C937.5 179.2 914.2 176.7 900 175 C885.8 173.3 871.7 167.5 860 170 C848.3 172.5 835.0 186.7 830 190" fill="none" stroke="#adc8f0" stroke-width="1.2" stroke-linecap="round" stroke-linejoin="round"/>
<path d="M50 50 C51.5 52.8 55.0 61.7 59 67 C63.0 72.3 69.0 77.0 74 82 C79.0 87.0 84.0 93.2 89 97 C94.0 100.8 99.8 104.2 104 105 C108.2 105.8 110.3 102.5 114 102 C117.7 101.5 121.5 101.5 126 102 C130.5 102.5 136.2 103.3 141 105 C145.8 106.7 149.3 108.7 155 112 C160.7 115.3 171.7 122.8 175 125" fill="none" stroke="#adc8f0" stroke-width="1.2" stroke-linecap="round" stroke-linejoin="round"/>
<path d="M215 45 C216.2 52.5 221.2 77.5 222 90 C222.8 102.5 219.5 110.8 220 120 C220.5 129.2 224.2 140.8 225 145" fill="none" stroke="#adc8f0" stroke-width="1.2" stroke-linecap="round" stroke-linejoin="round"/>
<path d="M285.6 105 C287.3 103.2 290.8 96.7 296 94.5 C301.2 92.3 310.7 90.7 316.8 92 C322.9 93.3 325.5 101.1 332.5 102.4 C339.5 103.7 354.2 100.2 358.6 99.7" fill="none" stroke="#adc8f0" stroke-width="1.2" stroke-linecap="round" stroke-linejoin="round"/>
<path d="M280.3 125.8 C281.2 123.2 283.9 114.1 285.6 110.2 C287.4 106.3 289.9 103.7 290.8 102.4" fill="none" stroke="#adc8f0" stroke-width="1.2" stroke-linecap="round" stroke-linejoin="round"/>
<path d="M840 420 C841.7 423.3 846.7 433.3 850 440 C853.3 446.7 856.7 453.3 860 460 C863.3 466.7 868.3 476.7 870 480" fill="none" stroke="#adc8f0" stroke-width="1.2" stroke-linecap="round" stroke-linejoin="round"/>
<path d="M850 430 C853.3 431.7 865.0 435.0 870 440 C875.0 445.0 878.3 456.7 880 460" fill="none" stroke="#adc8f0" stroke-width="1.2" stroke-linecap="round" stroke-linejoin="round"/>
<path d="M730 440 C735.0 441.7 748.3 445.0 760 450 C771.7 455.0 786.7 465.0 800 470 C813.3 475.0 833.3 478.3 840 480" fill="none" stroke="#adc8f0" stroke-width="1.2" stroke-linecap="round" stroke-linejoin="round"/>
<path d="M720 400 C716.7 401.7 705.0 405.0 700 410 C695.0 415.0 691.7 426.7 690 430" fill="none" stroke="#adc8f0" stroke-width="1.2" stroke-linecap="round" stroke-linejoin="round"/>
<path d="M480 45 L470 55" fill="none" stroke="#adc8f0" stroke-width="1.2" stroke-linecap="round" stroke-linejoin="round"/>
<path d="M550 174.5 L564.7 179 L581.5 185.7 L589.3 193.5 L598.2 207 L602.2 218.6 L611.5 225.6 L623.2 230.2 L630 235 L632.5 244.2 L630 255.8 L637 258.2 L646.5 265 L651 276.8 L660.4 290 L655.8 290 L641.8 269.8 L630 258.2 L618.5 253.5 L606.9 248.9 L597.5 239.5 L592.9 232.5 L583.6 225.6 L572 219 L562.6 211.6 L557 203 L552.4 193.5 L549 182.3 Z" fill="#abc6f1"/>
<path d="M535 174 L551 176" stroke="#c5d7f2" stroke-width="2"/>
<ellipse cx="70" cy="48" rx="7" ry="3" fill="#abc6f1"/>
<ellipse cx="405" cy="253" rx="4" ry="3" fill="#abc6f1"/>
<ellipse cx="342.6" cy="159" rx="5.5" ry="5.5" fill="#abc6f1"/>
<ellipse cx="328.4" cy="201" rx="5" ry="4" fill="#abc6f1"/>
<ellipse cx="387" cy="47.5" rx="3" ry="2.5" fill="#abc6f1"/>
<ellipse cx="400" cy="54.5" rx="3" ry="4" fill="#abc6f1"/>
<ellipse cx="420" cy="66" rx="4" ry="2.5" fill="#abc6f1"/>
<ellipse cx="453.5" cy="65.5" rx="2" ry="2.5" fill="#abc6f1"/>
<ellipse cx="465" cy="65.5" rx="2" ry="2.5" fill="#abc6f1"/>
<ellipse cx="124.5" cy="210.5" rx="3" ry="4.5" fill="#abc6f1"/>
<path d="M895 404 C895.8 402.7 898.2 397.8 900 396 C901.8 394.2 904.0 394.7 906 393 C908.0 391.3 910.0 386.8 912 386 C914.0 385.2 916.5 386.3 918 388 C919.5 389.7 920.2 393.3 921 396 C921.8 398.7 923.8 402.0 923 404 C922.2 406.0 919.0 407.5 916 408 C913.0 408.5 908.5 407.7 905 407 C901.5 406.3 896.7 404.5 895 404" fill="#abc6f1"/>
<path d="M75.4 525 L75.4 508 L80.5 490.6 L85.5 478 L80.5 465.4 L85.5 457.9 L95.5 447.8 L110.6 422.7 L113 405 L115.7 390 L119 375 L120 370 L125 358 L134 343 L143 325 L152 310 L162 289 L162 274 L163 232 L168 210 L174 198 L173.5 192.6 L169.6 184.8 L163 177 L161.7 169.1 L169.6 162.6 L182.6 154.8 L194.3 149.6 L202.2 152.2 L212.6 150.2 L225.6 145.6 L241.3 149.6 L254.3 153.5 L264.7 157.4 L263.4 169.1 L260.8 182.2 L257 198 L256 215 L254 232 L260 241 L280 239 L310 243 L336 240 L348 237 L359 241 L372 252 L386 254 L392 261 L402 266 L406 268 L401 282 L410 288 L424 291 L437 292 L448 303 L457 316 L465 329 L470 347 L475 352 L476 360 L481 368 L486 372 L485 390 L487 410 L490 425 L496 431 L520 428 L524 414 L526 400 L533 403 L544.5 412.6 L550 425.7 L552 440 L535 449 L533 458 L544 468 L556 468 L570 464 L596 462 L608 462 L626 471 L634 480 L640 490 L646 500 L652 502 L662 500 L671 502 L679 508 L691 520 L693 525 Z" fill="#abc6f1"/>
<path d="M568 478 C570.0 477.8 576.2 477.0 580 477 C583.8 477.0 589.5 475.5 591 478 C592.5 480.5 590.3 487.5 589 492 C587.7 496.5 584.3 500.3 583 505 C581.7 509.7 582.2 519.5 581 520 C579.8 520.5 577.3 512.7 576 508 C574.7 503.3 574.3 495.8 573 492 C571.7 488.2 568.8 487.3 568 485 C567.2 482.7 568.0 479.2 568 478" fill="#f2f1ec"/>
<path d="M578 480 C579.8 480.0 587.7 478.3 589 480 C590.3 481.7 587.5 488.3 586 490 C584.5 491.7 581.3 491.7 580 490 C578.7 488.3 578.3 481.7 578 480" fill="#cfdcb1"/>
<path d="M402 298 C403.3 298.0 407.7 295.8 410 298 C412.3 300.2 415.7 308.2 416 311 C416.3 313.8 414.0 315.2 412 315 C410.0 314.8 405.7 312.8 404 310 C402.3 307.2 402.3 300.0 402 298" fill="#d5dfb5"/>
<path d="M476 374 L480 373 L481 385 L478 390 L476 384 Z" fill="#f2f1ec"/>
<path d="M507 455 L510 456 L511 462 L508 460 Z" fill="#f2f1ec"/>
<path d="M428 338 L433 336 L435 350 L430 355 Z" fill="#f2f1ec"/>
<path d="M530 445 L534 450 Z" fill="#f2f1ec"/>
<path d="M868 525 C868.7 520.8 870.7 505.5 872 500 C873.3 494.5 873.5 494.3 876 492 C878.5 489.7 882.5 487.5 887 486 C891.5 484.5 896.7 484.5 903 483 C909.3 481.5 916.0 480.2 925 477 C934.0 473.8 950.3 467.2 957 464 C963.7 460.8 963.7 459.0 965 458 L965 525 Z" fill="#abc6f1"/>
<path d="M9 46 L22 62 L41 75 L57 87 L66 103 L76 113 L79 125 L82 151 L83 173 L82.6 182 L74 182.4 L75.7 204.7 L86 228.8 L99.8 242.6 L103.3 249.5 L105 263.3 L111.9 294.2 L120.5 296 L122.2 315 L129 328.7 L125.8 336 L117.4 342.3 L109 361.8 L100.6 378.6 L93 390 L88 402.6 L75.4 415 L65.4 420 L57.8 432.7 L50.3 437.8 L42.7 445.3 L37.7 460.4 L37.7 470.5 L35.2 485.5 L32.7 498 L30.2 525" fill="none" stroke="#b9b8b3" stroke-opacity="0.45" stroke-width="7" stroke-linejoin="round"/>
<path d="M475 352 L469 345 L466 333 L460 325 L453 308 L447.5 290 L449 272 L455 267 L448 259 L444 250 L437 241 L428 232 L426 220 L426 201 L417 190 L410 165 L411.4 144 L425.7 142 L438 137.9 L431.9 131.7 L436 127.6 L448.3 119.4 L454.4 107 L464.7 94.8 L470.8 80.5 L481 68.2 L495 62 L500 59.5 L520.5 57.3 L538.4 51.7 L549.6 50.6 L551.8 57.3 L576.4 59.5 L594.3 57.3 L630 58.4 L656.8 51.7 L677 54 L688 63 L693 72 L704 67 L708 62 L717 83 L727 86 L747 82 L767 87.5 L778 103 L801 105 L807 92 L801 78.5 L792 58 L816 49.5 L821 45" fill="none" stroke="#b9b8b3" stroke-opacity="0.45" stroke-width="7" stroke-linejoin="round"/>
<path d="M708 62 L727 54 L745 45" fill="none" stroke="#b9b8b3" stroke-opacity="0.45" stroke-width="7" stroke-linejoin="round"/>
<path d="M856 45 L881 63 L897 52 L917 47 L941 49 L939 67 L930 85 L939 99 L944 119 L950 125 L957 146 L959 165 L947 200 L949.3 224.7 L953.7 253.7 L949.3 267 L938 280.5 L924.7 273.8 L906.8 282.7 L893.4 298 L872.2 302.9 L861 314 L834.3 314 L837.6 325.2 L835.4 345.3 L825.3 343.1 L798.5 334.2 L787.3 338.6 L771.7 352 L776.2 361 L779.5 374.4 L778.4 387.8 L787.3 394.5 L796.3 405 L804.7 407.5 L809.4 418.6 L807.8 439.2 L788.8 428 L782.5 423.3 L776 430 L773 417 L766.7 413.8 L735 420.2 L725.5 423.3 L716 432.8 L697 432.8 L695 447 L681 457 L672.7 467 L642 467 L633.8 477.4 L627 474" fill="none" stroke="#b9b8b3" stroke-opacity="0.45" stroke-width="7" stroke-linejoin="round"/>
<path d="M941 49 L946 45" fill="none" stroke="#b9b8b3" stroke-opacity="0.45" stroke-width="7" stroke-linejoin="round"/>
<path d="M9 46 L22 62 L41 75 L57 87 L66 103 L76 113 L79 125 L82 151 L83 173 L82.6 182 L74 182.4 L75.7 204.7 L86 228.8 L99.8 242.6 L103.3 249.5 L105 263.3 L111.9 294.2 L120.5 296 L122.2 315 L129 328.7 L125.8 336 L117.4 342.3 L109 361.8 L100.6 378.6 L93 390 L88 402.6 L75.4 415 L65.4 420 L57.8 432.7 L50.3 437.8 L42.7 445.3 L37.7 460.4 L37.7 470.5 L35.2 485.5 L32.7 498 L30.2 525" fill="none" stroke="#6f6f6d" stroke-width="1.7" stroke-linejoin="round"/>
<path d="M475 352 L469 345 L466 333 L460 325 L453 308 L447.5 290 L449 272 L455 267 L448 259 L444 250 L437 241 L428 232 L426 220 L426 201 L417 190 L410 165 L411.4 144 L425.7 142 L438 137.9 L431.9 131.7 L436 127.6 L448.3 119.4 L454.4 107 L464.7 94.8 L470.8 80.5 L481 68.2 L495 62 L500 59.5 L520.5 57.3 L538.4 51.7 L549.6 50.6 L551.8 57.3 L576.4 59.5 L594.3 57.3 L630 58.4 L656.8 51.7 L677 54 L688 63 L693 72 L704 67 L708 62 L717 83 L727 86 L747 82 L767 87.5 L778 103 L801 105 L807 92 L801 78.5 L792 58 L816 49.5 L821 45" fill="none" stroke="#6f6f6d" stroke-width="1.7" stroke-linejoin="round"/>
<path d="M708 62 L727 54 L745 45" fill="none" stroke="#6f6f6d" stroke-width="1.7" stroke-linejoin="round"/>
<path d="M856 45 L881 63 L897 52 L917 47 L941 49 L939 67 L930 85 L939 99 L944 119 L950 125 L957 146 L959 165 L947 200 L949.3 224.7 L953.7 253.7 L949.3 267 L938 280.5 L924.7 273.8 L906.8 282.7 L893.4 298 L872.2 302.9 L861 314 L834.3 314 L837.6 325.2 L835.4 345.3 L825.3 343.1 L798.5 334.2 L787.3 338.6 L771.7 352 L776.2 361 L779.5 374.4 L778.4 387.8 L787.3 394.5 L796.3 405 L804.7 407.5 L809.4 418.6 L807.8 439.2 L788.8 428 L782.5 423.3 L776 430 L773 417 L766.7 413.8 L735 420.2 L725.5 423.3 L716 432.8 L697 432.8 L695 447 L681 457 L672.7 467 L642 467 L633.8 477.4 L627 474" fill="none" stroke="#6f6f6d" stroke-width="1.7" stroke-linejoin="round"/>
<path d="M941 49 L946 45" fill="none" stroke="#6f6f6d" stroke-width="1.7" stroke-linejoin="round"/>
<circle cx="116.5" cy="93.7" r="2.6" fill="#f07f2c" stroke="#fff" stroke-width="0.8"/>
<circle cx="176.8" cy="46.3" r="2.6" fill="#f07f2c" stroke="#fff" stroke-width="0.8"/>
<circle cx="222.8" cy="99.8" r="2.6" fill="#f07f2c" stroke="#fff" stroke-width="0.8"/>
<circle cx="164.5" cy="161.2" r="2.6" fill="#f07f2c" stroke="#fff" stroke-width="0.8"/>
<circle cx="160" cy="193.6" r="2.6" fill="#f07f2c" stroke="#fff" stroke-width="0.8"/>
<circle cx="380.4" cy="115.8" r="2.6" fill="#f07f2c" stroke="#fff" stroke-width="0.8"/>
<circle cx="385.1" cy="245.9" r="2.6" fill="#f07f2c" stroke="#fff" stroke-width="0.8"/>
<circle cx="873.4" cy="421.1" r="2.6" fill="#f07f2c" stroke="#fff" stroke-width="0.8"/>
<circle cx="862.6" cy="440.3" r="2.6" fill="#f07f2c" stroke="#fff" stroke-width="0.8"/>
<circle cx="901.7" cy="485.9" r="2.6" fill="#f07f2c" stroke="#fff" stroke-width="0.8"/>
<circle cx="693.6" cy="521.4" r="2.6" fill="#f07f2c" stroke="#fff" stroke-width="0.8"/>
<circle cx="143.3" cy="330.2" r="2.6" fill="#f07f2c" stroke="#fff" stroke-width="0.8"/>
<circle cx="19.3" cy="262.9" r="2.3" fill="#555" stroke="#fff" stroke-width="0.8"/>
<circle cx="566.3" cy="165" r="2.3" fill="#555" stroke="#fff" stroke-width="0.8"/>
<circle cx="571.9" cy="253.9" r="2.3" fill="#555" stroke="#fff" stroke-width="0.8"/>
<circle cx="530.3" cy="455.4" r="2.3" fill="#555" stroke="#fff" stroke-width="0.8"/>
<circle cx="475" cy="352" r="2.3" fill="#555" stroke="#fff" stroke-width="0.8"/>
<circle cx="711.2" cy="437.6" r="2.3" fill="#555" stroke="#fff" stroke-width="0.8"/>
<circle cx="827.6" cy="484.8" r="2.3" fill="#555" stroke="#fff" stroke-width="0.8"/>
<rect x="214" y="118" width="9" height="9" fill="#e3261b" stroke="#fff" stroke-width="1"/>
<text x="30.5" y="87.9" font-size="14.2" fill="#4a4a4a" paint-order="stroke" stroke="#fff" stroke-opacity="0.6" stroke-width="2.2" stroke-linejoin="round" textLength="86.5" lengthAdjust="spacingAndGlyphs">Kanchanaburi</text>
<text x="178.4" y="93.6" font-size="14.2" fill="#4a4a4a" paint-order="stroke" stroke="#fff" stroke-opacity="0.6" stroke-width="2.2" stroke-linejoin="round" textLength="88" lengthAdjust="spacingAndGlyphs">Pathum Thani</text>
<text x="190.7" y="142.7" font-size="14.2" fill="#4a4a4a" paint-order="stroke" stroke="#fff" stroke-opacity="0.6" stroke-width="2.2" stroke-linejoin="round" textLength="54.3" lengthAdjust="spacingAndGlyphs">Bangkok</text>
<text x="384.4" y="94.6" font-size="14.2" fill="#4a4a4a" paint-order="stroke" stroke="#fff" stroke-opacity="0.6" stroke-width="2.2" stroke-linejoin="round" textLength="106" lengthAdjust="spacingAndGlyphs">Mueang Sa Kaeo</text>
<text x="384.4" y="110.5" font-size="14.2" fill="#4a4a4a" paint-order="stroke" stroke="#fff" stroke-opacity="0.6" stroke-width="2.2" stroke-linejoin="round" textLength="43.6" lengthAdjust="spacingAndGlyphs">District</text>
<text x="62.9" y="177.3" font-size="14.2" fill="#4a4a4a" paint-order="stroke" stroke="#fff" stroke-opacity="0.6" stroke-width="2.2" stroke-linejoin="round" textLength="101.6" lengthAdjust="spacingAndGlyphs">Samut Songkhram</text>
<text x="-2" y="199" font-size="14.2" fill="#4a4a4a" paint-order="stroke" stroke="#fff" stroke-opacity="0.6" stroke-width="2.2" stroke-linejoin="round" textLength="158.7" lengthAdjust="spacingAndGlyphs">Mueang Phetchaburi District</text>
<text x="23" y="256.6" font-size="14.2" fill="#4a4a4a" paint-order="stroke" stroke="#fff" stroke-opacity="0.6" stroke-width="2.2" stroke-linejoin="round" textLength="38.7" lengthAdjust="spacingAndGlyphs">Mergui</text>
<text x="148" y="326" font-size="14.2" fill="#4a4a4a" paint-order="stroke" stroke="#fff" stroke-opacity="0.6" stroke-width="2.2" stroke-linejoin="round" textLength="130" lengthAdjust="spacingAndGlyphs">Prachuap Khiri Khan</text>
<text x="388.9" y="241" font-size="14.2" fill="#4a4a4a" paint-order="stroke" stroke="#fff" stroke-opacity="0.6" stroke-width="2.2" stroke-linejoin="round" textLength="78.2" lengthAdjust="spacingAndGlyphs">Chanthaburi</text>
<text x="571.5" y="179.5" font-size="13.2" fill="#4a4a4a" paint-order="stroke" stroke="#fff" stroke-opacity="0.6" stroke-width="2.2" stroke-linejoin="round" textLength="49.5" lengthAdjust="spacingAndGlyphs">Siĕmréab</text>
<text x="576.4" y="248.1" font-size="13.2" fill="#4a4a4a" paint-order="stroke" stroke="#fff" stroke-opacity="0.6" stroke-width="2.2" stroke-linejoin="round" textLength="49.1" lengthAdjust="spacingAndGlyphs">Poŭthĭsăt</text>
<text x="479" y="345.8" font-size="13.2" fill="#4a4a4a" paint-order="stroke" stroke="#fff" stroke-opacity="0.6" stroke-width="2.2" stroke-linejoin="round" textLength="95.6" lengthAdjust="spacingAndGlyphs">Krŏng Kaôh Kŏng</text>
<text x="677.4" y="351.4" font-size="14.2" fill="#4a4a4a" paint-order="stroke" stroke="#fff" stroke-opacity="0.6" stroke-width="2.2" stroke-linejoin="round" textLength="81.6" lengthAdjust="spacingAndGlyphs">Phnom Penh</text>
<text x="450.8" y="449.3" font-size="13.2" fill="#4a4a4a" paint-order="stroke" stroke="#fff" stroke-opacity="0.6" stroke-width="2.2" stroke-linejoin="round" textLength="79.5" lengthAdjust="spacingAndGlyphs">Kompong Som</text>
<text x="661.5" y="433.5" font-size="13.2" fill="#4a4a4a" paint-order="stroke" stroke="#fff" stroke-opacity="0.6" stroke-width="2.2" stroke-linejoin="round" textLength="48.8" lengthAdjust="spacingAndGlyphs">Tân Châu</text>
<text x="824.2" y="415" font-size="13.2" fill="#4a4a4a" paint-order="stroke" stroke="#fff" stroke-opacity="0.6" stroke-width="2.2" stroke-linejoin="round" textLength="49.2" lengthAdjust="spacingAndGlyphs">Biên Hòa</text>
<text x="752.7" y="458.6" font-size="14.7" fill="#4a4a4a" paint-order="stroke" stroke="#fff" stroke-opacity="0.6" stroke-width="2.2" stroke-linejoin="round" textLength="109.5" lengthAdjust="spacingAndGlyphs">Ho Chi Minh City</text>
<text x="826.4" y="473.2" font-size="14.7" fill="#4a4a4a" paint-order="stroke" stroke="#fff" stroke-opacity="0.6" stroke-width="2.2" stroke-linejoin="round" textLength="42.5" lengthAdjust="spacingAndGlyphs">Saigon</text>
<text x="833.8" y="489.5" font-size="13.2" fill="#4a4a4a" paint-order="stroke" stroke="#fff" stroke-opacity="0.6" stroke-width="2.2" stroke-linejoin="round" textLength="41.1" lengthAdjust="spacingAndGlyphs">My Tho</text>
<text x="905.8" y="481" font-size="13.2" fill="#4a4a4a" paint-order="stroke" stroke="#fff" stroke-opacity="0.6" stroke-width="2.2" stroke-linejoin="round" textLength="60" lengthAdjust="spacingAndGlyphs">Thanh Pho</text>
<text x="582.1" y="515.3" font-size="13.2" fill="#4a4a4a" paint-order="stroke" stroke="#fff" stroke-opacity="0.6" stroke-width="2.2" stroke-linejoin="round" textLength="111.1" lengthAdjust="spacingAndGlyphs">Thanh Pho Rach Gia</text>
<text x="150.7" y="108" font-size="10.8" fill="none" stroke="#fff" stroke-opacity="0.6" stroke-width="2.2" stroke-linejoin="round" textLength="43.6" lengthAdjust="spacingAndGlyphs">NAKHON</text>
<text x="150.7" y="108" font-size="10.8" fill="#675858" stroke="#675858" stroke-width="0.25" textLength="43.6" lengthAdjust="spacingAndGlyphs">NAKHON</text>
<text x="150.7" y="118.7" font-size="10.8" fill="none" stroke="#fff" stroke-opacity="0.6" stroke-width="2.2" stroke-linejoin="round" textLength="41.8" lengthAdjust="spacingAndGlyphs">PATHOM</text>
<text x="150.7" y="118.7" font-size="10.8" fill="#675858" stroke="#675858" stroke-width="0.25" textLength="41.8" lengthAdjust="spacingAndGlyphs">PATHOM</text>
<text x="85.2" y="136.2" font-size="10.8" fill="none" stroke="#fff" stroke-opacity="0.6" stroke-width="2.2" stroke-linejoin="round" textLength="60.3" lengthAdjust="spacingAndGlyphs">RATCHABURI</text>
<text x="85.2" y="136.2" font-size="10.8" fill="#675858" stroke="#675858" stroke-width="0.25" textLength="60.3" lengthAdjust="spacingAndGlyphs">RATCHABURI</text>
<text x="314.5" y="81.9" font-size="10.8" fill="none" stroke="#fff" stroke-opacity="0.6" stroke-width="2.2" stroke-linejoin="round" textLength="44.2" lengthAdjust="spacingAndGlyphs">PRACHIN</text>
<text x="314.5" y="81.9" font-size="10.8" fill="#675858" stroke="#675858" stroke-width="0.25" textLength="44.2" lengthAdjust="spacingAndGlyphs">PRACHIN</text>
<text x="326.8" y="92.6" font-size="10.8" fill="none" stroke="#fff" stroke-opacity="0.6" stroke-width="2.2" stroke-linejoin="round" textLength="21.9" lengthAdjust="spacingAndGlyphs">BURI</text>
<text x="326.8" y="92.6" font-size="10.8" fill="#675858" stroke="#675858" stroke-width="0.25" textLength="21.9" lengthAdjust="spacingAndGlyphs">BURI</text>
<text x="375.5" y="131.7" font-size="10.8" fill="none" stroke="#fff" stroke-opacity="0.6" stroke-width="2.2" stroke-linejoin="round" textLength="41.3" lengthAdjust="spacingAndGlyphs">SA KAEO</text>
<text x="375.5" y="131.7" font-size="10.8" fill="#675858" stroke="#675858" stroke-width="0.25" textLength="41.3" lengthAdjust="spacingAndGlyphs">SA KAEO</text>
<text x="86.3" y="222.7" font-size="10.8" fill="none" stroke="#fff" stroke-opacity="0.6" stroke-width="2.2" stroke-linejoin="round" textLength="68.2" lengthAdjust="spacingAndGlyphs">PHETCHABURI</text>
<text x="86.3" y="222.7" font-size="10.8" fill="#675858" stroke="#675858" stroke-width="0.25" textLength="68.2" lengthAdjust="spacingAndGlyphs">PHETCHABURI</text>
<text x="104.2" y="246.6" font-size="10.8" fill="none" stroke="#fff" stroke-opacity="0.6" stroke-width="2.2" stroke-linejoin="round" textLength="52.5" lengthAdjust="spacingAndGlyphs">PRACHUAP</text>
<text x="104.2" y="246.6" font-size="10.8" fill="#675858" stroke="#675858" stroke-width="0.25" textLength="52.5" lengthAdjust="spacingAndGlyphs">PRACHUAP</text>
<text x="118.7" y="257.7" font-size="10.8" fill="none" stroke="#fff" stroke-opacity="0.6" stroke-width="2.2" stroke-linejoin="round" textLength="25.7" lengthAdjust="spacingAndGlyphs">KHIRI</text>
<text x="118.7" y="257.7" font-size="10.8" fill="#675858" stroke="#675858" stroke-width="0.25" textLength="25.7" lengthAdjust="spacingAndGlyphs">KHIRI</text>
<text x="118" y="269.6" font-size="10.8" fill="none" stroke="#fff" stroke-opacity="0.6" stroke-width="2.2" stroke-linejoin="round" textLength="28" lengthAdjust="spacingAndGlyphs">KHAN</text>
<text x="118" y="269.6" font-size="10.8" fill="#675858" stroke="#675858" stroke-width="0.25" textLength="28" lengthAdjust="spacingAndGlyphs">KHAN</text>
<text x="253.3" y="204.8" font-size="10.8" fill="none" stroke="#fff" stroke-opacity="0.6" stroke-width="2.2" stroke-linejoin="round" textLength="29" lengthAdjust="spacingAndGlyphs">CHON</text>
<text x="253.3" y="204.8" font-size="10.8" fill="#675858" stroke="#675858" stroke-width="0.25" textLength="29" lengthAdjust="spacingAndGlyphs">CHON</text>
<text x="257" y="216" font-size="10.8" fill="none" stroke="#fff" stroke-opacity="0.6" stroke-width="2.2" stroke-linejoin="round" textLength="22.4" lengthAdjust="spacingAndGlyphs">BURI</text>
<text x="257" y="216" font-size="10.8" fill="#675858" stroke="#675858" stroke-width="0.25" textLength="22.4" lengthAdjust="spacingAndGlyphs">BURI</text>
<text x="302.4" y="220.9" font-size="10.8" fill="none" stroke="#fff" stroke-opacity="0.6" stroke-width="2.2" stroke-linejoin="round" textLength="41.1" lengthAdjust="spacingAndGlyphs">RAYONG</text>
<text x="302.4" y="220.9" font-size="10.8" fill="#675858" stroke="#675858" stroke-width="0.25" textLength="41.1" lengthAdjust="spacingAndGlyphs">RAYONG</text>
<text x="413" y="263.8" font-size="10.8" fill="none" stroke="#fff" stroke-opacity="0.6" stroke-width="2.2" stroke-linejoin="round" textLength="22.8" lengthAdjust="spacingAndGlyphs">TRAT</text>
<text x="413" y="263.8" font-size="10.8" fill="#675858" stroke="#675858" stroke-width="0.25" textLength="22.8" lengthAdjust="spacingAndGlyphs">TRAT</text>
<text x="420.9" y="212.4" font-size="10.8" fill="none" stroke="#fff" stroke-opacity="0.6" stroke-width="2.2" stroke-linejoin="round" textLength="35.1" lengthAdjust="spacingAndGlyphs">KRONG</text>
<text x="420.9" y="212.4" font-size="10.8" fill="#675858" stroke="#675858" stroke-width="0.25" textLength="35.1" lengthAdjust="spacingAndGlyphs">KRONG</text>
<text x="422.4" y="223.5" font-size="10.8" fill="none" stroke="#fff" stroke-opacity="0.6" stroke-width="2.2" stroke-linejoin="round" textLength="29.6" lengthAdjust="spacingAndGlyphs">PAILIN</text>
<text x="422.4" y="223.5" font-size="10.8" fill="#675858" stroke="#675858" stroke-width="0.25" textLength="29.6" lengthAdjust="spacingAndGlyphs">PAILIN</text>
<text x="438" y="181.8" font-size="10.8" fill="none" stroke="#fff" stroke-opacity="0.6" stroke-width="2.2" stroke-linejoin="round" textLength="68" lengthAdjust="spacingAndGlyphs">BATTAMBANG</text>
<text x="438" y="181.8" font-size="10.8" fill="#675858" stroke="#675858" stroke-width="0.25" textLength="68" lengthAdjust="spacingAndGlyphs">BATTAMBANG</text>
<text x="502.2" y="77.8" font-size="10.8" fill="none" stroke="#fff" stroke-opacity="0.6" stroke-width="2.2" stroke-linejoin="round" textLength="94.8" lengthAdjust="spacingAndGlyphs">OTDAR MEAN CHEY</text>
<text x="502.2" y="77.8" font-size="10.8" fill="#675858" stroke="#675858" stroke-width="0.25" textLength="94.8" lengthAdjust="spacingAndGlyphs">OTDAR MEAN CHEY</text>
<text x="462" y="127.2" font-size="10.8" fill="none" stroke="#fff" stroke-opacity="0.6" stroke-width="2.2" stroke-linejoin="round" textLength="43.8" lengthAdjust="spacingAndGlyphs">BANTEAY</text>
<text x="462" y="127.2" font-size="10.8" fill="#675858" stroke="#675858" stroke-width="0.25" textLength="43.8" lengthAdjust="spacingAndGlyphs">BANTEAY</text>
<text x="456.8" y="138.3" font-size="10.8" fill="none" stroke="#fff" stroke-opacity="0.6" stroke-width="2.2" stroke-linejoin="round" textLength="54.5" lengthAdjust="spacingAndGlyphs">MEANCHEY</text>
<text x="456.8" y="138.3" font-size="10.8" fill="#675858" stroke="#675858" stroke-width="0.25" textLength="54.5" lengthAdjust="spacingAndGlyphs">MEANCHEY</text>
<text x="644.5" y="129.5" font-size="10.8" fill="none" stroke="#fff" stroke-opacity="0.6" stroke-width="2.2" stroke-linejoin="round" textLength="70.9" lengthAdjust="spacingAndGlyphs">PREAH VIHEAR</text>
<text x="644.5" y="129.5" font-size="10.8" fill="#675858" stroke="#675858" stroke-width="0.25" textLength="70.9" lengthAdjust="spacingAndGlyphs">PREAH VIHEAR</text>
<text x="544" y="155" font-size="10.8" fill="none" stroke="#fff" stroke-opacity="0.6" stroke-width="2.2" stroke-linejoin="round" textLength="51" lengthAdjust="spacingAndGlyphs">SIEM REAP</text>
<text x="544" y="155" font-size="10.8" fill="#675858" stroke="#675858" stroke-width="0.25" textLength="51" lengthAdjust="spacingAndGlyphs">SIEM REAP</text>
<text x="761" y="124.8" font-size="10.8" fill="none" stroke="#fff" stroke-opacity="0.6" stroke-width="2.2" stroke-linejoin="round" textLength="69.2" lengthAdjust="spacingAndGlyphs">STUNG TRENG</text>
<text x="761" y="124.8" font-size="10.8" fill="#675858" stroke="#675858" stroke-width="0.25" textLength="69.2" lengthAdjust="spacingAndGlyphs">STUNG TRENG</text>
<text x="883" y="147.8" font-size="10.8" fill="none" stroke="#fff" stroke-opacity="0.6" stroke-width="2.2" stroke-linejoin="round" textLength="64" lengthAdjust="spacingAndGlyphs">RATANAKKIRI</text>
<text x="883" y="147.8" font-size="10.8" fill="#675858" stroke="#675858" stroke-width="0.25" textLength="64" lengthAdjust="spacingAndGlyphs">RATANAKKIRI</text>
<text x="634.5" y="234.3" font-size="10.8" fill="none" stroke="#fff" stroke-opacity="0.6" stroke-width="2.2" stroke-linejoin="round" textLength="86" lengthAdjust="spacingAndGlyphs">KAMPONG THOM</text>
<text x="634.5" y="234.3" font-size="10.8" fill="#675858" stroke="#675858" stroke-width="0.25" textLength="86" lengthAdjust="spacingAndGlyphs">KAMPONG THOM</text>
<text x="504.9" y="287" font-size="10.8" fill="none" stroke="#fff" stroke-opacity="0.6" stroke-width="2.2" stroke-linejoin="round" textLength="35.7" lengthAdjust="spacingAndGlyphs">PURSAT</text>
<text x="504.9" y="287" font-size="10.8" fill="#675858" stroke="#675858" stroke-width="0.25" textLength="35.7" lengthAdjust="spacingAndGlyphs">PURSAT</text>
<text x="779" y="263.8" font-size="10.8" fill="none" stroke="#fff" stroke-opacity="0.6" stroke-width="2.2" stroke-linejoin="round" textLength="32.5" lengthAdjust="spacingAndGlyphs">KRATIE</text>
<text x="779" y="263.8" font-size="10.8" fill="#675858" stroke="#675858" stroke-width="0.25" textLength="32.5" lengthAdjust="spacingAndGlyphs">KRATIE</text>
<text x="888.3" y="220.4" font-size="10.8" fill="none" stroke="#fff" stroke-opacity="0.6" stroke-width="2.2" stroke-linejoin="round" textLength="45.4" lengthAdjust="spacingAndGlyphs">MONDOL</text>
<text x="888.3" y="220.4" font-size="10.8" fill="#675858" stroke="#675858" stroke-width="0.25" textLength="45.4" lengthAdjust="spacingAndGlyphs">MONDOL</text>
<text x="903.5" y="232" font-size="10.8" fill="none" stroke="#fff" stroke-opacity="0.6" stroke-width="2.2" stroke-linejoin="round" textLength="16.8" lengthAdjust="spacingAndGlyphs">KIRI</text>
<text x="903.5" y="232" font-size="10.8" fill="#675858" stroke="#675858" stroke-width="0.25" textLength="16.8" lengthAdjust="spacingAndGlyphs">KIRI</text>
<text x="608.8" y="290.6" font-size="10.8" fill="none" stroke="#fff" stroke-opacity="0.6" stroke-width="2.2" stroke-linejoin="round" textLength="52.5" lengthAdjust="spacingAndGlyphs">KAMPONG</text>
<text x="608.8" y="290.6" font-size="10.8" fill="#675858" stroke="#675858" stroke-width="0.25" textLength="52.5" lengthAdjust="spacingAndGlyphs">KAMPONG</text>
<text x="608.8" y="302.4" font-size="10.8" fill="none" stroke="#fff" stroke-opacity="0.6" stroke-width="2.2" stroke-linejoin="round" textLength="52.5" lengthAdjust="spacingAndGlyphs">CHHNANG</text>
<text x="608.8" y="302.4" font-size="10.8" fill="#675858" stroke="#675858" stroke-width="0.25" textLength="52.5" lengthAdjust="spacingAndGlyphs">CHHNANG</text>
<text x="689.2" y="314" font-size="10.8" fill="none" stroke="#fff" stroke-opacity="0.6" stroke-width="2.2" stroke-linejoin="round" textLength="84.8" lengthAdjust="spacingAndGlyphs">KAMPONG CHAM</text>
<text x="689.2" y="314" font-size="10.8" fill="#675858" stroke="#675858" stroke-width="0.25" textLength="84.8" lengthAdjust="spacingAndGlyphs">KAMPONG CHAM</text>
<text x="493.7" y="366.6" font-size="10.8" fill="none" stroke="#fff" stroke-opacity="0.6" stroke-width="2.2" stroke-linejoin="round" textLength="52.5" lengthAdjust="spacingAndGlyphs">KOH KONG</text>
<text x="493.7" y="366.6" font-size="10.8" fill="#675858" stroke="#675858" stroke-width="0.25" textLength="52.5" lengthAdjust="spacingAndGlyphs">KOH KONG</text>
<text x="587.6" y="359.9" font-size="10.8" fill="none" stroke="#fff" stroke-opacity="0.6" stroke-width="2.2" stroke-linejoin="round" textLength="51.8" lengthAdjust="spacingAndGlyphs">KAMPONG</text>
<text x="587.6" y="359.9" font-size="10.8" fill="#675858" stroke="#675858" stroke-width="0.25" textLength="51.8" lengthAdjust="spacingAndGlyphs">KAMPONG</text>
<text x="602.8" y="371" font-size="10.8" fill="none" stroke="#fff" stroke-opacity="0.6" stroke-width="2.2" stroke-linejoin="round" textLength="23.2" lengthAdjust="spacingAndGlyphs">SPEU</text>
<text x="602.8" y="371" font-size="10.8" fill="#675858" stroke="#675858" stroke-width="0.25" textLength="23.2" lengthAdjust="spacingAndGlyphs">SPEU</text>
<text x="669.8" y="375.5" font-size="10.8" fill="none" stroke="#fff" stroke-opacity="0.6" stroke-width="2.2" stroke-linejoin="round" textLength="39.5" lengthAdjust="spacingAndGlyphs">KANDAL</text>
<text x="669.8" y="375.5" font-size="10.8" fill="#675858" stroke="#675858" stroke-width="0.25" textLength="39.5" lengthAdjust="spacingAndGlyphs">KANDAL</text>
<text x="721" y="370" font-size="10.8" fill="none" stroke="#fff" stroke-opacity="0.6" stroke-width="2.2" stroke-linejoin="round" textLength="25" lengthAdjust="spacingAndGlyphs">PREY</text>
<text x="721" y="370" font-size="10.8" fill="#675858" stroke="#675858" stroke-width="0.25" textLength="25" lengthAdjust="spacingAndGlyphs">PREY</text>
<text x="720" y="380" font-size="10.8" fill="none" stroke="#fff" stroke-opacity="0.6" stroke-width="2.2" stroke-linejoin="round" textLength="26" lengthAdjust="spacingAndGlyphs">VENG</text>
<text x="720" y="380" font-size="10.8" fill="#675858" stroke="#675858" stroke-width="0.25" textLength="26" lengthAdjust="spacingAndGlyphs">VENG</text>
<text x="754.3" y="383.3" font-size="10.8" fill="none" stroke="#fff" stroke-opacity="0.6" stroke-width="2.2" stroke-linejoin="round" textLength="20.7" lengthAdjust="spacingAndGlyphs">SVAY</text>
<text x="754.3" y="383.3" font-size="10.8" fill="#675858" stroke="#675858" stroke-width="0.25" textLength="20.7" lengthAdjust="spacingAndGlyphs">SVAY</text>
<text x="751.6" y="394.5" font-size="10.8" fill="none" stroke="#fff" stroke-opacity="0.6" stroke-width="2.2" stroke-linejoin="round" textLength="29" lengthAdjust="spacingAndGlyphs">RIENG</text>
<text x="751.6" y="394.5" font-size="10.8" fill="#675858" stroke="#675858" stroke-width="0.25" textLength="29" lengthAdjust="spacingAndGlyphs">RIENG</text>
<text x="778" y="361" font-size="10.8" fill="none" stroke="#fff" stroke-opacity="0.6" stroke-width="2.2" stroke-linejoin="round" textLength="45.5" lengthAdjust="spacingAndGlyphs">TAY NINH</text>
<text x="778" y="361" font-size="10.8" fill="#675858" stroke="#675858" stroke-width="0.25" textLength="45.5" lengthAdjust="spacingAndGlyphs">TAY NINH</text>
<text x="891.2" y="323.4" font-size="10.8" fill="none" stroke="#fff" stroke-opacity="0.6" stroke-width="2.2" stroke-linejoin="round" textLength="24.6" lengthAdjust="spacingAndGlyphs">BINH</text>
<text x="891.2" y="323.4" font-size="10.8" fill="#675858" stroke="#675858" stroke-width="0.25" textLength="24.6" lengthAdjust="spacingAndGlyphs">BINH</text>
<text x="885.7" y="334.6" font-size="10.8" fill="none" stroke="#fff" stroke-opacity="0.6" stroke-width="2.2" stroke-linejoin="round" textLength="35.3" lengthAdjust="spacingAndGlyphs">PHUOC</text>
<text x="885.7" y="334.6" font-size="10.8" fill="#675858" stroke="#675858" stroke-width="0.25" textLength="35.3" lengthAdjust="spacingAndGlyphs">PHUOC</text>
<text x="838.7" y="380" font-size="10.8" fill="none" stroke="#fff" stroke-opacity="0.6" stroke-width="2.2" stroke-linejoin="round" textLength="24.6" lengthAdjust="spacingAndGlyphs">BINH</text>
<text x="838.7" y="380" font-size="10.8" fill="#675858" stroke="#675858" stroke-width="0.25" textLength="24.6" lengthAdjust="spacingAndGlyphs">BINH</text>
<text x="832" y="391.8" font-size="10.8" fill="none" stroke="#fff" stroke-opacity="0.6" stroke-width="2.2" stroke-linejoin="round" textLength="38" lengthAdjust="spacingAndGlyphs">DUONG</text>
<text x="832" y="391.8" font-size="10.8" fill="#675858" stroke="#675858" stroke-width="0.25" textLength="38" lengthAdjust="spacingAndGlyphs">DUONG</text>
<text x="941.5" y="293.5" font-size="10.8" fill="none" stroke="#fff" stroke-opacity="0.6" stroke-width="2.2" stroke-linejoin="round" textLength="19" lengthAdjust="spacingAndGlyphs">ĐAK</text>
<text x="941.5" y="293.5" font-size="10.8" fill="#675858" stroke="#675858" stroke-width="0.25" textLength="19" lengthAdjust="spacingAndGlyphs">ĐAK</text>
<text x="644.8" y="419.2" font-size="10.8" fill="none" stroke="#fff" stroke-opacity="0.6" stroke-width="2.2" stroke-linejoin="round" textLength="30" lengthAdjust="spacingAndGlyphs">TAKEO</text>
<text x="644.8" y="419.2" font-size="10.8" fill="#675858" stroke="#675858" stroke-width="0.25" textLength="30" lengthAdjust="spacingAndGlyphs">TAKEO</text>
<text x="590.5" y="442.4" font-size="10.8" fill="none" stroke="#fff" stroke-opacity="0.6" stroke-width="2.2" stroke-linejoin="round" textLength="41.3" lengthAdjust="spacingAndGlyphs">KAMPOT</text>
<text x="590.5" y="442.4" font-size="10.8" fill="#675858" stroke="#675858" stroke-width="0.25" textLength="41.3" lengthAdjust="spacingAndGlyphs">KAMPOT</text>
<text x="678.6" y="476.2" font-size="10.8" fill="none" stroke="#fff" stroke-opacity="0.6" stroke-width="2.2" stroke-linejoin="round" textLength="50.1" lengthAdjust="spacingAndGlyphs">AN GIANG</text>
<text x="678.6" y="476.2" font-size="10.8" fill="#675858" stroke="#675858" stroke-width="0.25" textLength="50.1" lengthAdjust="spacingAndGlyphs">AN GIANG</text>
<text x="883.4" y="419.5" font-size="10.8" fill="none" stroke="#fff" stroke-opacity="0.6" stroke-width="2.2" stroke-linejoin="round" textLength="51.4" lengthAdjust="spacingAndGlyphs">DONG NAI</text>
<text x="883.4" y="419.5" font-size="10.8" fill="#675858" stroke="#675858" stroke-width="0.25" textLength="51.4" lengthAdjust="spacingAndGlyphs">DONG NAI</text>
<text x="955" y="419.5" font-size="10.8" fill="none" stroke="#fff" stroke-opacity="0.6" stroke-width="2.2" stroke-linejoin="round" textLength="10" lengthAdjust="spacingAndGlyphs">BI</text>
<text x="955" y="419.5" font-size="10.8" fill="#675858" stroke="#675858" stroke-width="0.25" textLength="10" lengthAdjust="spacingAndGlyphs">BI</text>
<text x="756" y="441.2" font-size="10.8" fill="none" stroke="#fff" stroke-opacity="0.6" stroke-width="2.2" stroke-linejoin="round" textLength="45.4" lengthAdjust="spacingAndGlyphs">LONG AN</text>
<text x="756" y="441.2" font-size="10.8" fill="#675858" stroke="#675858" stroke-width="0.25" textLength="45.4" lengthAdjust="spacingAndGlyphs">LONG AN</text>
<text x="747.1" y="470.3" font-size="10.8" fill="none" stroke="#fff" stroke-opacity="0.6" stroke-width="2.2" stroke-linejoin="round" textLength="30.2" lengthAdjust="spacingAndGlyphs">DONG</text>
<text x="747.1" y="470.3" font-size="10.8" fill="#675858" stroke="#675858" stroke-width="0.25" textLength="30.2" lengthAdjust="spacingAndGlyphs">DONG</text>
<text x="749.3" y="482.1" font-size="10.8" fill="none" stroke="#fff" stroke-opacity="0.6" stroke-width="2.2" stroke-linejoin="round" textLength="25.7" lengthAdjust="spacingAndGlyphs">THAP</text>
<text x="749.3" y="482.1" font-size="10.8" fill="#675858" stroke="#675858" stroke-width="0.25" textLength="25.7" lengthAdjust="spacingAndGlyphs">THAP</text>
<text x="786.2" y="485.4" font-size="10.8" fill="none" stroke="#fff" stroke-opacity="0.6" stroke-width="2.2" stroke-linejoin="round" textLength="21.2" lengthAdjust="spacingAndGlyphs">TIEN</text>
<text x="786.2" y="485.4" font-size="10.8" fill="#675858" stroke="#675858" stroke-width="0.25" textLength="21.2" lengthAdjust="spacingAndGlyphs">TIEN</text>
<text x="780.6" y="497.1" font-size="10.8" fill="none" stroke="#fff" stroke-opacity="0.6" stroke-width="2.2" stroke-linejoin="round" textLength="31.4" lengthAdjust="spacingAndGlyphs">GIANG</text>
<text x="780.6" y="497.1" font-size="10.8" fill="#675858" stroke="#675858" stroke-width="0.25" textLength="31.4" lengthAdjust="spacingAndGlyphs">GIANG</text>
<text x="819.7" y="508.9" font-size="10.8" fill="none" stroke="#fff" stroke-opacity="0.6" stroke-width="2.2" stroke-linejoin="round" textLength="40.3" lengthAdjust="spacingAndGlyphs">BEN TRE</text>
<text x="819.7" y="508.9" font-size="10.8" fill="#675858" stroke="#675858" stroke-width="0.25" textLength="40.3" lengthAdjust="spacingAndGlyphs">BEN TRE</text>
<text x="777.3" y="510" font-size="10.8" fill="none" stroke="#fff" stroke-opacity="0.6" stroke-width="2.2" stroke-linejoin="round" textLength="24.6" lengthAdjust="spacingAndGlyphs">VINH</text>
<text x="777.3" y="510" font-size="10.8" fill="#675858" stroke="#675858" stroke-width="0.25" textLength="24.6" lengthAdjust="spacingAndGlyphs">VINH</text>
<text x="776" y="522.8" font-size="10.8" fill="none" stroke="#fff" stroke-opacity="0.6" stroke-width="2.2" stroke-linejoin="round" textLength="25.9" lengthAdjust="spacingAndGlyphs">LONG</text>
<text x="776" y="522.8" font-size="10.8" fill="#675858" stroke="#675858" stroke-width="0.25" textLength="25.9" lengthAdjust="spacingAndGlyphs">LONG</text>
<text x="717" y="495.5" font-size="10.8" fill="none" stroke="#fff" stroke-opacity="0.6" stroke-width="2.2" stroke-linejoin="round" textLength="36" lengthAdjust="spacingAndGlyphs">THANH</text>
<text x="717" y="495.5" font-size="10.8" fill="#675858" stroke="#675858" stroke-width="0.25" textLength="36" lengthAdjust="spacingAndGlyphs">THANH</text>
<text x="728" y="507.3" font-size="10.8" fill="none" stroke="#fff" stroke-opacity="0.6" stroke-width="2.2" stroke-linejoin="round" textLength="20" lengthAdjust="spacingAndGlyphs">PHO</text>
<text x="728" y="507.3" font-size="10.8" fill="#675858" stroke="#675858" stroke-width="0.25" textLength="20" lengthAdjust="spacingAndGlyphs">PHO</text>
<text x="728" y="519.5" font-size="10.8" fill="none" stroke="#fff" stroke-opacity="0.6" stroke-width="2.2" stroke-linejoin="round" textLength="20" lengthAdjust="spacingAndGlyphs">CAN</text>
<text x="728" y="519.5" font-size="10.8" fill="#675858" stroke="#675858" stroke-width="0.25" textLength="20" lengthAdjust="spacingAndGlyphs">CAN</text>
<text x="45" y="447" font-size="10.8" fill="none" stroke="#fff" stroke-opacity="0.6" stroke-width="2.2" stroke-linejoin="round" textLength="57" lengthAdjust="spacingAndGlyphs">CHUMPHON</text>
<text x="45" y="447" font-size="10.8" fill="#675858" stroke="#675858" stroke-width="0.25" textLength="57" lengthAdjust="spacingAndGlyphs">CHUMPHON</text>
<text x="892" y="62.9" font-size="11.5" font-style="italic" fill="#5e8568" paint-order="stroke" stroke="#fff" stroke-opacity="0.6" stroke-width="2.2" stroke-linejoin="round" textLength="43" lengthAdjust="spacingAndGlyphs">Virachey</text>
<text x="566.6" y="456.7" font-size="11.5" font-style="italic" fill="#5e8568" paint-order="stroke" stroke="#fff" stroke-opacity="0.6" stroke-width="2.2" stroke-linejoin="round" textLength="34.4" lengthAdjust="spacingAndGlyphs">Phnom</text>
<text x="569.4" y="469.8" font-size="11.5" font-style="italic" fill="#5e8568" paint-order="stroke" stroke="#fff" stroke-opacity="0.6" stroke-width="2.2" stroke-linejoin="round" textLength="28.9" lengthAdjust="spacingAndGlyphs">Bokor</text>
<text x="952.7" y="231" font-size="11.5" font-style="italic" fill="#5e8568" paint-order="stroke" stroke="#fff" stroke-opacity="0.6" stroke-width="2.2" stroke-linejoin="round">Yo</text>
<text x="952.7" y="243" font-size="11.5" font-style="italic" fill="#5e8568" paint-order="stroke" stroke="#fff" stroke-opacity="0.6" stroke-width="2.2" stroke-linejoin="round">Do</text>
<rect x="252" y="126.3" width="26.3" height="26.5" rx="2.5" fill="#6695dc" stroke="#fff" stroke-opacity="0.8" stroke-width="1"/>
<path d="M260.65 129.8 L262.95 132.1 L265.15 129.3 L267.35 132.1 L269.65 129.8 L268.45 134.3 L266.75 136.3 L263.55 136.3 L261.85 134.3 Z" fill="#fff"/>
<text x="265.15" y="149.3" font-size="11.5" font-weight="bold" fill="#fff" text-anchor="middle">7</text>
<rect x="111.5" y="350" width="26" height="27.5" rx="2.5" fill="#6695dc" stroke="#fff" stroke-opacity="0.8" stroke-width="1"/>
<path d="M120 353.5 L122.3 355.8 L124.5 353 L126.7 355.8 L129 353.5 L127.8 358 L126.1 360 L122.9 360 L121.2 358 Z" fill="#fff"/>
<text x="124.5" y="374" font-size="11.5" font-weight="bold" fill="#fff" text-anchor="middle" textLength="19" lengthAdjust="spacingAndGlyphs">AH2</text>
<rect x="58.3" y="500" width="25.2" height="27" rx="2.5" fill="#6aaa6c" stroke="#fff" stroke-opacity="0.8" stroke-width="1"/>
<path d="M66.4 503.5 L68.7 505.8 L70.9 503 L73.1 505.8 L75.4 503.5 L74.2 508 L72.5 510 L69.3 510 L67.6 508 Z" fill="#fff"/>
<text x="70.9" y="523.5" font-size="11.5" font-weight="bold" fill="#fff" text-anchor="middle">41</text>
<circle cx="476" cy="131" r="11" fill="#01b8aa" fill-opacity="0.6" stroke="#0e8b7e" stroke-width="1.3"/>
<circle cx="551.1" cy="76.3" r="8.5" fill="#01b8aa" fill-opacity="0.6" stroke="#0e8b7e" stroke-width="1.3"/>
<circle cx="687.4" cy="118.7" r="8" fill="#01b8aa" fill-opacity="0.6" stroke="#0e8b7e" stroke-width="1.3"/>
<circle cx="585.8" cy="147.1" r="10" fill="#01b8aa" fill-opacity="0.6" stroke="#0e8b7e" stroke-width="1.3"/>
<circle cx="809" cy="118.3" r="8" fill="#01b8aa" fill-opacity="0.6" stroke="#0e8b7e" stroke-width="1.3"/>
<circle cx="903" cy="118.9" r="8" fill="#01b8aa" fill-opacity="0.6" stroke="#0e8b7e" stroke-width="1.3"/>
<circle cx="439.2" cy="219.3" r="8" fill="#01b8aa" fill-opacity="0.6" stroke="#0e8b7e" stroke-width="1.3"/>
<circle cx="490.3" cy="207.9" r="10" fill="#01b8aa" fill-opacity="0.6" stroke="#0e8b7e" stroke-width="1.3"/>
<circle cx="690.4" cy="223.5" r="8" fill="#01b8aa" fill-opacity="0.6" stroke="#0e8b7e" stroke-width="1.3"/>
<circle cx="544.7" cy="270.5" r="8" fill="#01b8aa" fill-opacity="0.6" stroke="#0e8b7e" stroke-width="1.3"/>
<circle cx="808.1" cy="244.3" r="8.5" fill="#01b8aa" fill-opacity="0.6" stroke="#0e8b7e" stroke-width="1.3"/>
<circle cx="893" cy="229.1" r="8" fill="#01b8aa" fill-opacity="0.6" stroke="#0e8b7e" stroke-width="1.3"/>
<circle cx="640.5" cy="293.3" r="8.5" fill="#01b8aa" fill-opacity="0.6" stroke="#0e8b7e" stroke-width="1.3"/>
<circle cx="747.1" cy="308" r="9.5" fill="#01b8aa" fill-opacity="0.6" stroke="#0e8b7e" stroke-width="1.3"/>
<circle cx="525.4" cy="366.6" r="8.5" fill="#01b8aa" fill-opacity="0.6" stroke="#0e8b7e" stroke-width="1.3"/>
<circle cx="612.1" cy="360.3" r="8.5" fill="#01b8aa" fill-opacity="0.6" stroke="#0e8b7e" stroke-width="1.3"/>
<circle cx="668.5" cy="348.4" r="26" fill="#01b8aa" fill-opacity="0.6" stroke="#0e8b7e" stroke-width="1.3"/>
<circle cx="694.2" cy="379.3" r="10" fill="#01b8aa" fill-opacity="0.6" stroke="#0e8b7e" stroke-width="1.3"/>
<circle cx="730.4" cy="374.4" r="8.5" fill="#01b8aa" fill-opacity="0.6" stroke="#0e8b7e" stroke-width="1.3"/>
<circle cx="775.7" cy="400" r="8.5" fill="#01b8aa" fill-opacity="0.6" stroke="#0e8b7e" stroke-width="1.3"/>
<circle cx="666.9" cy="422.4" r="8" fill="#01b8aa" fill-opacity="0.6" stroke="#0e8b7e" stroke-width="1.3"/>
<circle cx="556.4" cy="449.5" r="9" fill="#01b8aa" fill-opacity="0.6" stroke="#0e8b7e" stroke-width="1.3"/>
<circle cx="614.1" cy="438.7" r="8.5" fill="#01b8aa" fill-opacity="0.6" stroke="#0e8b7e" stroke-width="1.3"/>
<circle cx="617.8" cy="467" r="8.5" fill="#01b8aa" fill-opacity="0.6" stroke="#0e8b7e" stroke-width="1.3"/>
<rect x="670" y="354" width="7" height="7" fill="#5a7a70" opacity="0.8"/>
<path d="M14.3 496 V511.5 L23.5 506.5 L18.5 503.5" fill="none" stroke="#111" stroke-width="3" stroke-linejoin="miter"/>
<text x="31" y="512" font-size="15.5" fill="#1a1a1a" paint-order="stroke" stroke="#fff" stroke-opacity="0.6" stroke-width="2.2" stroke-linejoin="round" textLength="29.5" lengthAdjust="spacingAndGlyphs">Bing</text>
<text x="695" y="517" font-size="9.5" fill="#3a3a3a" paint-order="stroke" stroke="#fff" stroke-opacity="0.6" stroke-width="2.2" stroke-linejoin="round" textLength="207" lengthAdjust="spacingAndGlyphs">© 2017 HERE © 2017 Microsoft Corporation</text>
<text x="909" y="517" font-size="10" fill="#2f56c0" text-decoration="underline" textLength="27" lengthAdjust="spacingAndGlyphs">Terms</text>
<line x1="909" y1="518.5" x2="936" y2="518.5" stroke="#2f56c0" stroke-width="0.8"/></svg>
</div>

<!-- gap -->
<div class="a" style="left:970px;top:0;width:22px;height:537px;background:#e8e8e8"></div>
<div class="a" style="left:970px;top:0;width:22px;height:1px;background:#d0d0d0"></div>

<!-- VISUALIZATIONS panel -->
<div class="a" style="left:992px;top:0;width:181px;height:537px;background:#464646"></div>
<div class="a" style="left:992px;top:1px;width:181px;height:48px;background:#222"></div>
<div class="a" style="left:992px;top:195px;width:181px;height:36px;background:#222"></div>
<div class="a" style="left:992px;top:0;width:1px;height:537px;background:#1a1a1a"></div>
<div class="a" style="left:1005px;top:15px;font-size:15px;font-weight:bold;color:#fff;transform:scaleX(0.872);transform-origin:0 0;white-space:nowrap">VISUALIZATIONS</div>
<svg class="a" style="left:1151px;top:17px" width="12" height="16"><path d="M3 2 L9 8 L3 14" fill="none" stroke="#c8c8c8" stroke-width="1.3"/></svg>
<svg class="a" style="left:992px;top:45px" width="181" height="150" viewBox="992 45 181 150">
<defs>
<g id="ax"><path d="M0.5 0 V18.5 H18" fill="none" stroke="#8f8f8f" stroke-width="1"/></g>
</defs>
<!-- row 1 -->
<g transform="translate(1002,54)"><use href="#ax"/>
<rect x="1" y="3" width="4" height="5" fill="#bdbdbd"/><rect x="5" y="3" width="8" height="5" fill="#e8913c"/>
<rect x="1" y="10" width="7" height="5" fill="#bdbdbd"/><rect x="8" y="10" width="8" height="5" fill="#e8913c"/></g>
<g transform="translate(1030,54)"><use href="#ax"/>
<rect x="3" y="5" width="5" height="8" fill="#e8913c"/><rect x="3" y="13" width="5" height="5" fill="#bdbdbd"/>
<rect x="10" y="2" width="5" height="8" fill="#e8913c"/><rect x="10" y="10" width="5" height="8" fill="#bdbdbd"/></g>
<g transform="translate(1058,54)"><use href="#ax"/>
<rect x="1" y="2" width="10" height="3" fill="#f0cf8e"/><rect x="1" y="5" width="15" height="3" fill="#7fa9dd"/>
<rect x="1" y="10" width="12" height="3" fill="#f0cf8e"/><rect x="1" y="13" width="9" height="3" fill="#7fa9dd"/></g>
<g transform="translate(1086,54)"><use href="#ax"/>
<rect x="2" y="7" width="3" height="11" fill="#f0cf8e"/><rect x="5" y="1" width="3" height="17" fill="#7fa9dd"/>
<rect x="10" y="4" width="3" height="14" fill="#f0cf8e"/><rect x="13" y="8" width="3" height="10" fill="#7fa9dd"/></g>
<g transform="translate(1114,54)"><use href="#ax"/>
<rect x="1" y="3" width="5" height="5" fill="#8a8a8a"/><rect x="6" y="3" width="10" height="5" fill="#7fa9dd"/>
<rect x="1" y="10" width="8" height="5" fill="#8a8a8a"/><rect x="9" y="10" width="7" height="5" fill="#7fa9dd"/></g>
<g transform="translate(1142,54)"><use href="#ax"/>
<rect x="3" y="2" width="5" height="8" fill="#7fa9dd"/><rect x="3" y="10" width="5" height="8" fill="#8a8a8a"/>
<rect x="11" y="2" width="5" height="10" fill="#7fa9dd"/><rect x="11" y="12" width="5" height="6" fill="#8a8a8a"/></g>
<!-- row 2 -->
<g transform="translate(1002,78)"><use href="#ax"/>
<path d="M1 8 L5 5 L10 9 L16 3" fill="none" stroke="#4a88cc" stroke-width="1.2"/>
<path d="M1 16 L10 5 L14 9" fill="none" stroke="#e8b0a0" stroke-width="1.2"/></g>
<g transform="translate(1030,78)"><use href="#ax"/>
<path d="M1 18 V8 L6 5 L11 9 L16 3 V18 Z" fill="#f1d9a6"/>
<path d="M8 18 L8 10 L12 6 L18 6 V18 Z" fill="#e8913c"/>
<path d="M1 18 V11 L6 10 L11 14 L18 14 V18 Z" fill="#bdbdbd"/></g>
<g transform="translate(1058,78)"><use href="#ax"/>
<path d="M1 18 V6 L4 3 L7 6 L10 2 L13 6 L17 2 V18 Z" fill="#f0cf8e"/>
<path d="M1 12 L5 9 L9 12 L13 9 L17 11 V14 L13 12 L9 15 L5 12 L1 15 Z" fill="#4a88cc"/>
<path d="M1 18 V15 L5 12 L9 15 L13 12 L17 14 V18 Z" fill="#e8913c"/></g>
<g transform="translate(1086,78)"><use href="#ax"/>
<rect x="3" y="5" width="5" height="13" fill="#e8913c"/><rect x="3" y="11" width="5" height="7" fill="#bdbdbd"/>
<rect x="10" y="9" width="5" height="9" fill="#e8913c"/><rect x="10" y="13" width="5" height="5" fill="#bdbdbd"/>
<path d="M1 14 L6 10 L11 13 L16 8" fill="none" stroke="#e06030" stroke-width="1"/>
<path d="M17.5 0 V18" stroke="#e8913c" stroke-width="1"/></g>
<g transform="translate(1114,78)"><use href="#ax"/>
<rect x="2" y="7" width="3" height="11" fill="#f0cf8e"/><rect x="5" y="1" width="3" height="17" fill="#7fa9dd"/>
<rect x="10" y="4" width="3" height="14" fill="#f0cf8e"/><rect x="13" y="8" width="3" height="10" fill="#7fa9dd"/>
<path d="M1 13 L6 10 L11 12 L16 8" fill="none" stroke="#e06030" stroke-width="1"/>
<path d="M17.5 0 V18" stroke="#e8913c" stroke-width="1"/></g>
<g transform="translate(1142,78)"><use href="#ax"/>
<rect x="2" y="5" width="4" height="4" fill="#f1d9a6"/><rect x="7" y="3" width="4" height="5" fill="#f1d9a6"/><rect x="12" y="2" width="4" height="5" fill="#f1d9a6"/>
<rect x="2" y="9" width="4" height="4" fill="#7fa9dd"/><rect x="7" y="8" width="4" height="5" fill="#e8913c"/><rect x="12" y="7" width="4" height="5" fill="#7fa9dd"/>
<rect x="2" y="13" width="4" height="5" fill="#e8913c"/><rect x="7" y="13" width="4" height="5" fill="#7fa9dd"/><rect x="12" y="12" width="4" height="6" fill="#e8913c"/></g>
<!-- row 3 -->
<g transform="translate(1002,102)"><use href="#ax"/>
<rect x="3" y="4" width="3" height="14" fill="#e0e0e0"/><rect x="6" y="4" width="3" height="9" fill="#e05a3a"/>
<rect x="9" y="9" width="3" height="7" fill="#e05a3a"/><rect x="12" y="2" width="3" height="10" fill="#6fb59a"/><rect x="15" y="2" width="2" height="16" fill="#e0e0e0"/></g>
<g transform="translate(1030,102)"><use href="#ax"/>
<circle cx="4.5" cy="5" r="1.6" fill="#e05a3a"/><circle cx="12" cy="4" r="1.6" fill="#6fb59a"/>
<circle cx="3.5" cy="11" r="1.6" fill="#4a88cc"/><circle cx="9" cy="9.5" r="1.6" fill="#f0cf8e"/><circle cx="16" cy="9" r="1.6" fill="#4a88cc"/><circle cx="13" cy="13" r="1.6" fill="#8f8f8f"/></g>
<g transform="translate(1058,102)">
<circle cx="10" cy="9" r="8.5" fill="#7fa9dd"/>
<path d="M10 9 L2 7 A8.5 8.5 0 0 1 10 0.5 Z" fill="#f1d9a6"/>
<path d="M10 9 L2.5 13.5 A8.5 8.5 0 0 1 2 7 Z" fill="#e8b0a0"/>
<path d="M10 9 L10 0.5 M10 9 L2 7 M10 9 L2.5 13.5" stroke="#454545" stroke-width="0.8"/></g>
<g transform="translate(1086,102)">
<circle cx="9" cy="9" r="6.5" fill="none" stroke="#4a88cc" stroke-width="4"/>
<path d="M9 2.5 A6.5 6.5 0 0 1 15 6" fill="none" stroke="#f0cf8e" stroke-width="4"/>
<path d="M3 6 A6.5 6.5 0 0 1 9 2.5" fill="none" stroke="#7fa9dd" stroke-width="4"/>
<path d="M9 0 V5 M16 6 L13 7.5 M2 6 L5 7.5 M5 15 L7 12 M13 15 L11 12" stroke="#454545" stroke-width="1"/></g>
<g transform="translate(1114,102)">
<rect x="0.5" y="0.5" width="17" height="17" fill="#fff" stroke="#9a9a9a"/>
<rect x="5" y="2" width="7" height="4" fill="#c9dcf2"/><rect x="5" y="7" width="7" height="3" fill="#c9dcf2"/><rect x="13" y="2" width="4" height="8" fill="#c9dcf2"/>
<path d="M0 11.5 H18 M9 11 V18 M4.5 0 V11 M12.5 0 V11" stroke="#9a9a9a" stroke-width="1"/></g>
<g transform="translate(1140,100)">
<rect x="1" y="1" width="20" height="20" fill="#222" stroke="#f2c80f" stroke-width="2"/>
<circle cx="11" cy="11" r="7" fill="#6a6a6a"/>
<path d="M4 11 H18 M5 7.5 H17 M5 14.5 H17 M11 4 V18 M7.5 5 V17 M14.5 5 V17" stroke="#4a4a4a" stroke-width="0.8"/></g>
<!-- row 4 -->
<g transform="translate(1002,126)">
<path d="M1 2 L9 1 L10 3 L1 4 Z M3 6 L10 5 L12 8 L4 9 Z M1 10 L8 10 L10 12 L5 14 Z" fill="#bdbdbd"/>
<path d="M1 8 L6 6 L8 9 L2 11 Z M9 12 L16 11 L15 15 L11 16 Z" fill="#4a88cc"/>
<path d="M13 9 L17 8 L16 11 L12 11 Z" fill="#7fa9dd"/>
<rect x="15" y="0" width="3" height="7" fill="#f0cf8e"/></g>
<g transform="translate(1030,126)">
<path d="M1 1 H18 V15 H1 Z" fill="#4a6fa0"/>
<path d="M1 1 H18 V15 H1 Z M6 1 V6 H12 V1 M1 8 H8 V15 M10 8 H18 M12 8 V15" fill="none" stroke="#9ec1ea" stroke-width="1"/>
<path d="M2 18 H8 M10 18 H17" stroke="#8f8f8f" stroke-width="1"/></g>
<g transform="translate(1058,126)">
<rect x="1" y="1" width="17" height="3" fill="#7fa9dd"/><rect x="3" y="6" width="13" height="3" fill="#f0cf8e"/>
<rect x="5" y="11" width="9" height="3" fill="#7fa9dd"/><rect x="7" y="15" width="5" height="3" fill="#7fa9dd"/></g>
<g transform="translate(1086,126)">
<path d="M2.5 15 A7 7 0 0 1 12 6" fill="none" stroke="#f0cf8e" stroke-width="3"/>
<path d="M12 6 A7 7 0 0 1 16.5 15" fill="none" stroke="#6fb59a" stroke-width="3"/>
<path d="M7 14 L12 9" stroke="#666" stroke-width="1.5"/></g>
<g transform="translate(1114,126)">
<rect x="0.5" y="1.5" width="17" height="14" fill="#fff" stroke="#9a9a9a"/>
<text x="9" y="10" font-size="8" font-weight="bold" fill="#4a88cc" text-anchor="middle" font-family="Liberation Sans">123</text>
<path d="M3 12.5 H15" stroke="#666" stroke-width="1"/></g>
<g transform="translate(1142,126)">
<rect x="0.5" y="0.5" width="17" height="17" fill="#fff" stroke="#9a9a9a"/>
<rect x="2" y="2" width="3" height="14" fill="#aaa"/>
<path d="M7 3.5 H13 M7 8.5 H13 M7 13 H10" stroke="#7fa9dd" stroke-width="2"/></g>
<!-- row 5 -->
<g transform="translate(1002,150)">
<rect x="0.5" y="2.5" width="17" height="13" fill="#fff" stroke="#9a9a9a"/>
<path d="M4 10 L6.5 6 L9 10 Z" fill="#6fb59a"/><path d="M10 6 L15 6 L12.5 10 Z" fill="#e05a3a"/>
<path d="M3 13 H15" stroke="#666" stroke-width="1"/></g>
<g transform="translate(1030,150)">
<rect x="0.5" y="0.5" width="16" height="17" fill="#fff" stroke="#9a9a9a"/>
<rect x="0" y="0" width="17" height="2.5" fill="#4a88cc"/>
<rect x="3" y="4" width="3" height="2.5" fill="#7fa9dd"/><rect x="3" y="8" width="3" height="2.5" fill="#f0cf8e"/><rect x="3" y="12" width="3" height="2.5" fill="#e8b0a0"/>
<path d="M9 10 H19 L15 14 V19 H13 V14 Z" fill="#8a8a8a"/></g>
<g transform="translate(1058,150)">
<rect x="0" y="0" width="18" height="18" fill="#fff"/>
<rect x="0" y="0" width="18" height="2.5" fill="#4a88cc"/>
<path d="M0.5 2 V17.5 H17.5 V2 M0 7.5 H18 M0 12.5 H18 M6 2 V18 M12 2 V18" fill="none" stroke="#aaa" stroke-width="1"/></g>
<g transform="translate(1086,150)">
<rect x="0" y="0" width="18" height="18" fill="#fff"/>
<rect x="12" y="2" width="6" height="16" fill="#c9dcf2"/><rect x="0" y="12" width="18" height="6" fill="#c9dcf2"/>
<rect x="0" y="0" width="18" height="2.5" fill="#4a88cc"/>
<path d="M0.5 2 V17.5 H17.5 V2 M0 7.5 H18 M0 12.5 H18 M6 2 V18 M12 2 V18" fill="none" stroke="#aaa" stroke-width="1"/></g>
<text x="1123" y="168" font-size="21" font-weight="bold" fill="#7fa9dd" text-anchor="middle" font-family="Liberation Sans">R</text>
<g transform="translate(1142,150)">
<circle cx="9.5" cy="9" r="8.5" fill="#4a88cc" stroke="#9a9a9a" stroke-width="1"/>
<path d="M3 5 L8 3 L12 6 L7 8 Z M12 9 L17 7 L16 12 L12 13 Z M4 12 L9 11 L10 15 L6 16 Z" fill="#4cae4c"/>
<path d="M1 9 H18 M9.5 0.5 V17.5 M3 4 Q9.5 8 16 4 M3 14 Q9.5 10 16 14" fill="none" stroke="#9a9a9a" stroke-width="0.8"/></g>
<!-- more -->
<rect x="1003" y="180" width="3" height="3" fill="#eee"/><rect x="1009" y="180" width="3" height="3" fill="#eee"/><rect x="1015" y="180" width="3" height="3" fill="#eee"/>
</svg>

<!-- tabs -->
<svg class="a" style="left:1010px;top:201px" width="110" height="26" viewBox="0 0 110 26">
<g fill="none" stroke="#fff" stroke-width="1.1">
<path d="M3 2.5 H19"/>
<rect x="3.5" y="5.5" width="19.5" height="6" rx="1" stroke-dasharray="1.8 1.4"/>
<rect x="3.5" y="14.5" width="19.5" height="6.5" rx="1" stroke-dasharray="1.8 1.4"/>
<rect x="44.5" y="2.5" width="14" height="4.5" rx="1.8"/>
<path d="M58.5 4.7 H61.5 V9.8 H52.7 V12.6"/>
<rect x="50.5" y="12.6" width="4.5" height="9.4" rx="0.8"/>
<circle cx="91.6" cy="10.4" r="8.2"/>
<path d="M97.3 16.3 L102.7 22"/>
<path d="M84 14.5 L88 12 L91 13.5 L98 8.5"/>
<path d="M86.5 15 V18.5 M89.5 14 V19 M92.5 14 V19 M95.5 12 V18"/>
</g>
</svg>
<div class="a" style="left:1005px;top:229px;width:36px;height:2px;background:#f2c80f"></div>
<div class="a" style="left:1167px;top:232px;width:5px;height:305px;background:#5d5d5d;border-radius:2px"></div>

<div class="lbl" style="top:238px">Location</div>
<div class="well" style="top:259px;height:36px"></div>
<div class="pill" style="top:263px"><b>Province</b></div>
<svg class="a" style="left:1133px;top:268px" width="28" height="14"><path d="M2 5 H9 L5.5 9 Z" fill="#8a8a8a"/><path d="M17 1.5 L26 10.5 M26 1.5 L17 10.5" stroke="#8a8a8a" stroke-width="1.1"/></svg>

<div class="lbl" style="top:308px">Legend</div>
<div class="well" style="top:328px"><span>Drag data fields here</span></div>
<div class="lbl" style="top:368px">Latitude</div>
<div class="well" style="top:388px"><span>Drag data fields here</span></div>
<div class="lbl" style="top:428px">Longitude</div>
<div class="well" style="top:448px"><span>Drag data fields here</span></div>
<div class="lbl" style="top:488px">Size</div>
<div class="well" style="top:508px;height:40px"></div>
<div class="pill" style="top:512px"><b>Population[2]</b></div>
<svg class="a" style="left:1133px;top:517px" width="28" height="14"><path d="M2 5 H9 L5.5 9 Z" fill="#8a8a8a"/><path d="M17 1.5 L26 10.5 M26 1.5 L17 10.5" stroke="#8a8a8a" stroke-width="1.1"/></svg>

<!-- FIELDS panel -->
<div class="a" style="left:1173px;top:0;width:180px;height:537px;background:#464646"></div>
<div class="a" style="left:1173px;top:1px;width:180px;height:48px;background:#222"></div>
<div class="a" style="left:1173px;top:0;width:1px;height:537px;background:#111"></div>
<div class="a" style="left:1186px;top:15px;font-size:15px;font-weight:bold;color:#fff;transform:scaleX(0.9);transform-origin:0 0;white-space:nowrap">FIELDS</div>
<svg class="a" style="left:1339px;top:17px" width="12" height="16"><path d="M3 2 L9 8 L3 14" fill="none" stroke="#c8c8c8" stroke-width="1.3"/></svg>
<div class="a" style="left:1184px;top:56px;width:175px;height:30px;background:#222;border:1px solid #111"></div>
<svg class="a" style="left:1195px;top:62px" width="18" height="18"><circle cx="10.5" cy="6.5" r="5" fill="none" stroke="#bbb" stroke-width="1.2"/><path d="M7 10 L2 15.5" stroke="#bbb" stroke-width="1.3"/></svg>
<div class="a" style="left:1220px;top:65px;font-size:12px;color:#c8c8c8">Search</div>
<div class="a" style="left:1173px;top:95px;width:180px;height:1px;background:#3a3a3a"></div>
<svg class="a" style="left:1182px;top:110px" width="10" height="10"><path d="M8 2 V8 H2 Z" fill="#9a9a9a"/></svg>
<svg class="a" style="left:1199px;top:110px" width="14" height="13"><rect x="0" y="0" width="13" height="12" fill="#e6e6e6"/><path d="M0 3.5 H13 M0 6.5 H13 M0 9.5 H13 M4.5 3 V12 M8.5 3 V12" stroke="#464646" stroke-width="1"/></svg>
<div class="a" style="left:1224px;top:109px;font-size:12px;color:#f2c80f;white-space:nowrap">Cities and towns[edit]</div>
<div class="frow" style="top:132px"><i></i><span>City</span></div>
<div class="frow" style="top:154px"><i></i><span>Khmer</span></div>
<div class="frow" style="top:176px"><i class="ck"></i><span>Population[2]</span></div>
<div class="frow" style="top:198px"><i class="ck"></i><span>Province</span></div>
<svg class="a" style="left:1205px;top:180px" width="12" height="12"><path d="M2.5 6 L5 9 L10 3" fill="none" stroke="#222" stroke-width="1.6"/></svg>
<svg class="a" style="left:1205px;top:202px" width="12" height="12"><path d="M2.5 6 L5 9 L10 3" fill="none" stroke="#222" stroke-width="1.6"/></svg>
<div class="a" style="left:1221px;top:178px;font-size:14px;color:#999">&#931;</div>
<svg class="a" style="left:1182px;top:230px" width="10" height="10"><path d="M3 1 L7 5 L3 9 Z" fill="#9a9a9a"/></svg>
<svg class="a" style="left:1199px;top:229px" width="14" height="13"><rect x="0" y="0" width="13" height="12" fill="#e6e6e6"/><path d="M0 3.5 H13 M0 6.5 H13 M0 9.5 H13 M4.5 3 V12 M8.5 3 V12" stroke="#464646" stroke-width="1"/></svg>
<div class="a" style="left:1224px;top:228px;font-size:12px;color:#fff;white-space:nowrap">Largest cities[edit]</div>
<svg class="a" style="left:1182px;top:254px" width="10" height="10"><path d="M3 1 L7 5 L3 9 Z" fill="#9a9a9a"/></svg>
<svg class="a" style="left:1199px;top:253px" width="14" height="13"><rect x="0" y="0" width="13" height="12" fill="#e6e6e6"/><path d="M0 3.5 H13 M0 6.5 H13 M0 9.5 H13 M4.5 3 V12 M8.5 3 V12" stroke="#464646" stroke-width="1"/></svg>
<div class="a" style="left:1224px;top:252px;font-size:12px;color:#fff;white-space:nowrap">Other cities and tow...</div>
<div class="a" style="left:0;top:0;width:1353px;height:1px;background:#d6d6d6"></div>
</body></html>
